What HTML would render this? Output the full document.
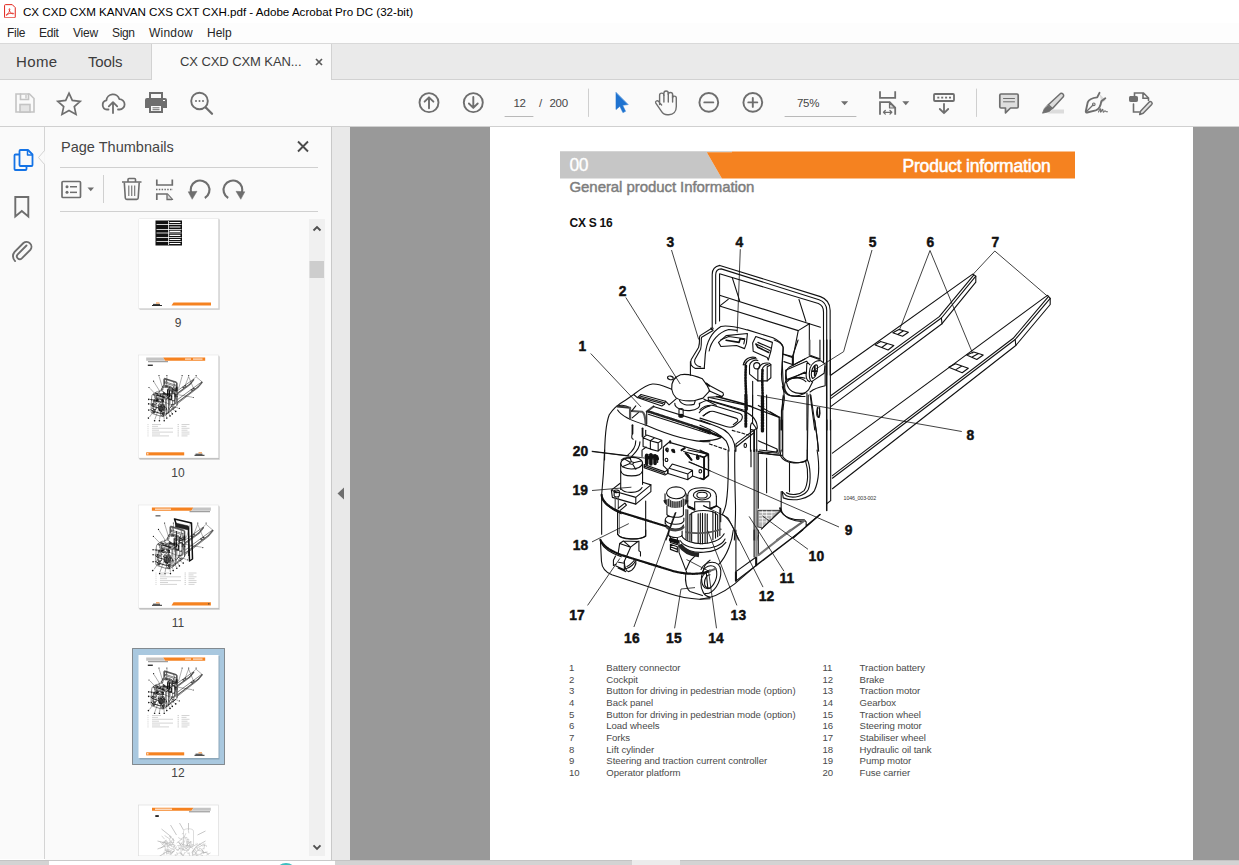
<!DOCTYPE html>
<html lang="en">
<head>
<meta charset="utf-8">
<title>CX CXD CXM KANVAN CXS CXT CXH.pdf - Adobe Acrobat Pro DC (32-bit)</title>
<style>
html,body{margin:0;padding:0;}
body{width:1239px;height:865px;overflow:hidden;position:relative;background:#fff;font-family:"Liberation Sans","DejaVu Sans",sans-serif;color:#000;}
.abs{position:absolute;}
#titlebar{left:0;top:0;width:1239px;height:23px;background:#fff;}
#titletext{left:23px;top:4px;font-size:11.6px;line-height:15px;white-space:nowrap;color:#000;}
#menubar{left:0;top:23px;width:1239px;height:20px;background:#fdfdfd;border-bottom:1px solid #d9d9d9;}
#menubar span{position:absolute;top:3px;font-size:12px;line-height:15px;color:#262626;}
#tabbar{left:0;top:44px;width:1239px;height:35px;background:#eaeaea;border-bottom:1px solid #d2d2d2;}
#tabbar .t{position:absolute;top:8px;font-size:15px;line-height:20px;color:#3c3c3c;white-space:nowrap;}
#acttab{left:151px;top:44px;width:181px;height:36px;background:#fafafa;border-left:1px solid #d2d2d2;border-right:1px solid #d2d2d2;box-sizing:border-box;}
#toolbar{left:0;top:80px;width:1239px;height:46px;background:#fafafa;border-bottom:1px solid #d0d0d0;}
#leftstrip{left:0;top:127px;width:44px;height:732px;background:#fafafa;border-right:1px solid #d4d4d4;}
#thumbpanel{left:45px;top:127px;width:286px;height:733px;background:#fafafa;border-right:1px solid #c9c9c9;}
#splitter{left:332px;top:127px;width:18px;height:733px;background:#e9e9e9;}
#docarea{left:350px;top:127px;width:889px;height:733px;background:#999;overflow:hidden;}
#page{left:140.400px;top:0;width:702.400px;height:740px;background:#fff;}
.lg{font-size:9.600px;line-height:11px;color:#4a4a4a;white-space:nowrap;letter-spacing:-0.060px;}
.tl{width:40px;text-align:center;font-size:12px;line-height:14px;color:#444;}
.tb{font-size:11.5px;line-height:14px;color:#464646;white-space:nowrap;letter-spacing:-0.3px;}
#bottom{left:0;top:859.500px;width:1239px;height:6px;background:#d3d3d3;border-top:1px solid #c4c4c4;box-sizing:border-box;}
</style>
</head>
<body>
<div id="titlebar" class="abs"></div>
<svg class="abs" style="left:4px;top:3.500px" width="12" height="14.500" viewBox="0 0 13 16"><path d="M1.500 0.700h7.500l3.300 3.300v10.300a1 1 0 0 1-1 1H1.500a1 1 0 0 1-1-1V1.700a1 1 0 0 1 1-1z" fill="#fff" stroke="#e2231a" stroke-width="1.100"/><path d="M3 11.500c1.500-0.600 2.800-2.600 3.300-5.500 0.200-1.200-1-1.200-0.800 0 0.500 2.600 2.300 4.600 4.300 5 1 0.200 1-0.900 0-0.900-2.300 0-5 0.500-6.800 1.400-0.900 0.500-0.600 1.200 0 1z" fill="none" stroke="#e2231a" stroke-width="0.900"/></svg>
<div id="titletext" class="abs">CX CXD CXM KANVAN CXS CXT CXH.pdf - Adobe Acrobat Pro DC (32-bit)</div>
<div id="menubar" class="abs">
<span style="left:7px;letter-spacing:-0.3px">File</span><span style="left:39px;letter-spacing:-0.25px">Edit</span><span style="left:73px;letter-spacing:-0.2px">View</span><span style="left:112px;letter-spacing:-0.35px">Sign</span><span style="left:149px;letter-spacing:0.2px">Window</span><span style="left:207px">Help</span>
</div>
<div id="tabbar" class="abs">
<span class="t" style="left:16px;letter-spacing:0.4px">Home</span><span class="t" style="left:88px;letter-spacing:-0.15px">Tools</span>
</div>
<div id="acttab" class="abs"><span class="abs" style="left:28px;top:8px;font-size:13px;line-height:20px;color:#3c3c3c;white-space:nowrap;letter-spacing:-0.08px">CX CXD CXM KAN...</span>
<svg class="abs" style="left:163px;top:14px" width="8" height="8" viewBox="0 0 8 8"><path d="M1 1L7 7M7 1L1 7" stroke="#5a5a5a" stroke-width="1.700" fill="none"/></svg></div>
<div id="toolbar" class="abs"></div>
<svg class="abs" style="left:0;top:80px" width="1239" height="46" viewBox="0 80 1239 46" fill="none" stroke="#6e6e6e" stroke-width="1.8" stroke-linejoin="round" stroke-linecap="round">
<!-- save (disabled) -->
<g stroke="#c4c4c4" stroke-width="1.6" stroke-linejoin="miter"><path d="M16 94h13.5l4.5 4.5V112H16z"/><path d="M20.5 94v5.5h8V94" /><path d="M26 95.5v2.5" stroke-width="1.4"/><rect x="20" y="104.5" width="10" height="7.5" fill="#e4e4e4"/></g>
<!-- star -->
<path d="M69 93.2l3.3 7.2 7.9 0.9-5.9 5.3 1.7 7.8-7-4-7 4 1.7-7.8-5.9-5.3 7.9-0.9z" stroke-width="1.7" stroke-linejoin="miter"/>
<!-- cloud upload -->
<path d="M108.5 109.5h-1.5a4.6 4.6 0 0 1-0.6-9.1 6.6 6.6 0 0 1 12.9-1.3 5.2 5.2 0 0 1 0.2 10.4h-1.5" stroke-width="1.8"/>
<path d="M113 113v-10.5M108.8 106.3l4.2-4.2 4.2 4.2" stroke-width="1.8"/>
<!-- printer -->
<g stroke="none" fill="#6e6e6e"><path d="M149 92h14v6h-2v-4h-10v4h-2z"/><path d="M147 98h18a2 2 0 0 1 2 2v8h-4v-4h-14v4h-4v-8a2 2 0 0 1 2-2z"/><path d="M149 104h14v9h-14zM151 106v5h10v-5z" fill-rule="evenodd"/><rect x="152.5" y="107.3" width="7" height="1"/><rect x="152.5" y="109.2" width="7" height="1"/><rect x="163" y="100" width="2" height="1" fill="#fff"/></g>
<!-- search -->
<circle cx="199.5" cy="101" r="8.3" stroke-width="1.9"/><path d="M205.8 107.5l6.2 6.2" stroke-width="2.3"/>
<g stroke="none" fill="#6e6e6e"><circle cx="196" cy="101" r="1"/><circle cx="199.5" cy="101" r="1"/><circle cx="203" cy="101" r="1"/></g>
<!-- page up / down -->
<circle cx="429" cy="102.6" r="9.5" stroke-width="1.9"/><path d="M429 108.2v-10.5M424.6 101.7l4.4-4.4 4.4 4.4" stroke-width="1.9"/>
<circle cx="473.3" cy="102.6" r="9.5" stroke-width="1.9"/><path d="M473.3 97v10.5M468.9 103.5l4.4 4.4 4.4-4.4" stroke-width="1.9"/>
<path d="M505 116.5h28" stroke="#b9b9b9" stroke-width="1"/>
<path d="M588.5 89v27.5" stroke="#cfcfcf" stroke-width="1"/>
<!-- pointer -->
<path d="M616 92.7v16.8l3.9-3.2 3 6.3 2.6-1.3-2.9-6.1 5.2-0.6z" fill="#1f73d0" stroke="#1f73d0" stroke-width="0.6"/>
<!-- hand -->
<path d="M659.600 104.500V95.300a2.150 2.150 0 0 1 4.300 0V93.200a2.200 2.200 0 0 1 4.400 0V94.600a2.150 2.150 0 0 1 4.300 0V98a1.850 1.850 0 0 1 3.700 0V106.500c0 5-3 8.200-7.500 8.200h-1.500c-3 0-4.600-1.300-6-3.600l-5.500-8a1.600 1.600 0 0 1 2.700-1.700l3.100 3.600" stroke-width="1.400"/>
<path d="M663.900 95.300V102M668.300 93.500V102M672.600 95V102" stroke-width="1.400"/>
<!-- zoom out/in -->
<circle cx="708.8" cy="102.400" r="9.400" stroke-width="1.900"/><path d="M704.300 102.400h9" stroke-width="1.900"/>
<circle cx="752.800" cy="102.400" r="9.400" stroke-width="1.900"/><path d="M748.300 102.400h9M752.800 97.900v9" stroke-width="1.900"/>
<path d="M785 116.500h71" stroke="#b9b9b9" stroke-width="1"/>
<path d="M841 101.200h7.200l-3.600 4z" fill="#6e6e6e" stroke="none"/>
<!-- fit width -->
<path d="M880 91.200v6.600h15.200v-6.600" stroke-width="1.800" stroke-linejoin="miter" stroke-linecap="butt"/>
<path d="M880 114.800v-12.600h9.700l5.500 5.500v7.100" stroke-width="1.800" stroke-linejoin="miter" stroke-linecap="butt"/>
<path d="M889.500 102.500v5.500h5.500z" fill="#d6d6d6" stroke-width="1.200"/>
<path d="M883.500 112.300h8.300M885.300 110.500l-1.800 1.800 1.800 1.800M890 110.500l1.800 1.800-1.800 1.800" stroke-width="1.300"/>
<path d="M902.300 101.200h7l-3.500 4z" fill="#6e6e6e" stroke="none"/>
<!-- scroll mode -->
<rect x="934" y="94" width="20" height="7" rx="1" stroke-width="1.800"/>
<g stroke="none" fill="#6e6e6e"><rect x="937.300" y="96.700" width="2" height="1.800"/><rect x="941.200" y="96.700" width="2" height="1.800"/><rect x="945.100" y="96.700" width="2" height="1.800"/><rect x="949" y="96.700" width="2" height="1.800"/></g>
<path d="M944 104v9M939.800 109l4.200 4.200 4.200-4.200" stroke-width="1.800"/>
<path d="M976.500 89v27.500" stroke="#cfcfcf" stroke-width="1"/>
<!-- comment -->
<path d="M1001 94h16a1.200 1.200 0 0 1 1.200 1.200v11.600a1.200 1.200 0 0 1-1.200 1.200h-6.500l-5 4.800v-4.800h-4.500a1.200 1.200 0 0 1-1.200-1.200v-11.600a1.200 1.200 0 0 1 1.200-1.200z" fill="#dedede" stroke-width="1.700"/>
<path d="M1003.500 98.500h11M1003.500 101.800h11" stroke-width="1"/>
<!-- highlighter -->
<path d="M1048 113.500h16v-4h-12z" fill="#dcdcdc" stroke="none"/>
<path d="M1060.500 93.500a2.300 2.300 0 0 1 3 3l-11 12-4.200-3.800z" fill="#dcdcdc" stroke-width="1.500"/>
<path d="M1047.800 105.200l4.200 3.800-3 2.700-6.500 1.500 1.700-4.300z" fill="#6e6e6e" stroke-width="0.800"/>
<!-- sign -->
<path d="M1099.500 93.800l6 6.500-3.800 3z" fill="#d8d8d8" stroke="none"/>
<path d="M1099.500 92.800l-2.300 4.600c-4.500 0.500-8.500 2.300-9.500 5l-1.900 8.800c-0.200 0.900 0.500 1.500 1.300 1.300l8.600-2.200c3-0.900 5-4.500 5.600-9l4-3" stroke-width="1.900"/>
<path d="M1086.500 111.500l6.500-6.500" stroke-width="1.300"/><circle cx="1093.800" cy="104.300" r="1.300" stroke-width="1.100"/>
<path d="M1098.500 112c1-2.500 1.800-3.400 2.200-3.200 0.600 0.300-0.800 3.300 0 3.400 0.700 0.100 1.300-2.900 2-2.800 0.600 0.100 0 2.600 0.700 2.700 0.600 0.100 1-1.300 1.600-1.300 0.600 0 0.500 1 2.500 1" stroke-width="1.100"/>
<!-- edit/redact -->
<path d="M1134.500 97v-4h9l5 5v2.500M1143 93.300v5h5" stroke-width="1.600" stroke-linejoin="miter"/>
<rect x="1129.500" y="96.500" width="8" height="5" rx="0.800" fill="#6e6e6e" stroke-width="1"/>
<path d="M1133.500 104v8h6" stroke-width="1.600" stroke-linejoin="miter"/>
<path d="M1149 102.200a1.700 1.700 0 0 1 2.700 2.300l-8.500 8.800-3.500 1.200 1-3.600z" fill="#e2e2e2" stroke-width="1.500"/>
</svg>
<span class="abs tb" style="left:513.500px;top:96px;">12</span>
<span class="abs tb" style="left:539px;top:96px;">/</span>
<span class="abs tb" style="left:549.500px;top:96px;">200</span>
<span class="abs tb" style="left:797px;top:96px;">75%</span>
<div id="leftstrip" class="abs"></div>
<div id="thumbpanel" class="abs"></div>
<div id="thumbscroll" class="abs"></div>
<span class="abs" style="left:61px;top:137.600px;font-size:14.500px;line-height:18px;color:#444;white-space:nowrap;letter-spacing:0.020px">Page Thumbnails</span>
<span class="abs tl" style="left:158px;top:316px">9</span>
<span class="abs tl" style="left:158px;top:466px">10</span>
<span class="abs tl" style="left:158px;top:616px">11</span>
<span class="abs tl" style="left:158px;top:766px">12</span>
<svg class="abs" style="left:0;top:127px;z-index:3" width="350" height="733" viewBox="0 127 350 733" fill="none">
<!-- left strip icons -->
<path d="M44.500 150.500l-6 7 6 7" stroke="#d4d4d4" stroke-width="1" fill="#fafafa"/>
<path d="M45 151.500v12" stroke="#fafafa" stroke-width="1.500"/>
<g stroke="#1473e6" stroke-width="1.800" stroke-linejoin="round"><path d="M19.500 154.500h-4a1 1 0 0 0-1 1v13.500a1 1 0 0 0 1 1h10a1 1 0 0 0 1-1v-2"/><path d="M20.500 150h7.500l4.500 4.500v10.500a1 1 0 0 1-1 1h-11a1 1 0 0 1-1-1v-14a1 1 0 0 1 1-1z"/><path d="M27.500 150.300v4.700h4.700" stroke-width="1.500"/></g>
<path d="M15.300 197h13v19.500l-6.500-5.500-6.500 5.500z" stroke="#6e6e6e" stroke-width="1.900" stroke-linejoin="miter"/>
<path d="M26.500 246.500l-8.800 8.800a2.900 2.900 0 0 0 4.100 4.100l8.500-8.500a4.900 4.900 0 0 0-6.900-6.900l-8.800 8.800a6.800 6.800 0 0 0 0.500 9.300" stroke="#6e6e6e" stroke-width="1.900" stroke-linecap="round" transform="translate(0,-1)"/>
<!-- header -->
<path d="M298 141.500l10 10M308 141.500l-10 10" stroke="#4b4b4b" stroke-width="1.900"/>
<path d="M60 167.500h258M60 211.500h258" stroke="#d0d0d0" stroke-width="1"/>
<!-- options -->
<rect x="62" y="181.500" width="18.500" height="16" rx="1" stroke="#6e6e6e" stroke-width="1.700"/>
<g fill="#6e6e6e"><circle cx="67" cy="186.700" r="1.500"/><circle cx="67" cy="192.300" r="1.500"/><rect x="70" y="186" width="7" height="1.500"/><rect x="70" y="191.600" width="7" height="1.500"/><path d="M87.500 187.500h6.500l-3.250 3.800z"/></g>
<path d="M103.500 175v28" stroke="#d0d0d0"/>
<!-- trash -->
<g stroke="#6e6e6e" stroke-width="1.600"><path d="M122 182h19.500M128 182v-2.500a1 1 0 0 1 1-1h5.500a1 1 0 0 1 1 1v2.500"/><path d="M124.300 182.500l1 15.500a1.500 1.500 0 0 0 1.500 1.400h9.900a1.500 1.500 0 0 0 1.500-1.400l1-15.500"/><path d="M128.800 185.500v10.500M131.750 185.500v10.500M134.700 185.500v10.500" stroke-width="1.100"/></g>
<!-- page break -->
<g stroke="#6e6e6e" stroke-width="1.700"><path d="M156.800 179.500v5.500h15.500v-5.500"/><path d="M156 189.500h17" stroke-dasharray="1.500 1.300" stroke-width="1.500"/><path d="M156.800 200v-6h10.500l5 5.500v0.500"/><path d="M167 194v5.500h5" stroke-width="1.300" fill="#dcdcdc"/></g>
<!-- rotate -->
<g stroke="#6e6e6e" stroke-width="2.100" stroke-linecap="butt"><path d="M191.600 194A9.400 9.400 0 1 1 204.800 198"/><path d="M188.200 191.800l8.800-0.500-4.800 8z" fill="#6e6e6e" stroke-width="0.500"/></g>
<g stroke="#6e6e6e" stroke-width="2.100" stroke-linecap="butt"><path d="M241.400 194A9.400 9.400 0 1 0 228.200 198"/><path d="M244.800 191.800l-8.800-0.500 4.800 8z" fill="#6e6e6e" stroke-width="0.500"/></g>
<!-- scrollbar -->
<rect x="309" y="219" width="16" height="637" fill="#f0f0f0"/>
<rect x="309.500" y="261" width="14.500" height="17" fill="#cdcdcd"/>
<path d="M313.500 230.500l3.500-3.500 3.500 3.500" stroke="#505050" stroke-width="1.900"/>
<path d="M313.500 845.300l3.500 3.500 3.500-3.500" stroke="#505050" stroke-width="1.900"/>
<!-- collapse arrow -->
<path d="M344 487.500v12l-6.500-6z" fill="#6e6e6e"/>
<!-- thumb 9 -->
<rect x="140.0" y="219.5" width="80.0" height="90.5" fill="#e3e3e3"/><rect x="139.2" y="218.8" width="80.0" height="90.5" fill="#b9b9b9"/>
<rect x="138.500" y="219" width="80" height="89.500" fill="#fff"/><path d="M138.500 219v89.500h80V219" stroke="#e0e0e0" stroke-width="0.500"/>
<rect x="155.500" y="220.500" width="26.500" height="25" fill="#111"/>
<path d="M156.500 224.500h25M156.500 229.500h25M156.500 233h25M156.500 237.500h25M156.500 241.500h25M168.500 221v24" stroke="#fff" stroke-width="0.800"/>
<path d="M169.500 222.500h11M169.500 227h11M169.500 231.300h11M169.500 235.300h11M169.500 239.500h11M169.500 243.500h11" stroke="#fff" stroke-width="1.200"/>
<path d="M173.500 302.500h37.500v3.100h-39.500z" fill="#f58220"/><path d="M152 305.500h10M153 304.400h7" stroke="#111" stroke-width="0.900"/><path d="M156 303h3.500" stroke="#f58220" stroke-width="0.900"/>
<!-- thumb 10 -->
<rect x="140.0" y="356.5" width="80.0" height="103.5" fill="#e3e3e3"/><rect x="139.2" y="355.8" width="80.0" height="103.5" fill="#b9b9b9"/>
<rect x="138.500" y="355" width="80" height="103" fill="#fff" stroke="#e0e0e0" stroke-width="0.500"/>
<path d="M146.2 357.6h17l2 3.1h-19z" fill="#c4c4c4"/><path d="M163.2 357.6h42v3.100h-40z" fill="#f58220"/><rect x="148.0" y="361.2" width="20" height="1" fill="#888"/><rect x="185.0" y="358.4" width="6" height="1.4" fill="#fbd9bd"/><rect x="193.0" y="358.4" width="9.5" height="1.4" fill="#fbd9bd"/><rect x="147.8" y="364.6" width="5" height="1.3" fill="#222"/><rect x="146.2" y="452.3" width="38" height="3.1" fill="#f58220"/><rect x="147.0" y="453.0" width="1.5" height="1.6" fill="#fbd9bd"/><path d="M194.5 455.3h10M195.5 454.2h7" stroke="#111" stroke-width="0.9"/><path d="M198.5 452.8h3.500" stroke="#f58220" stroke-width="0.900"/><!--thumb10--><g fill="#111"><circle cx="149.0" cy="387.5" r="0.6"/><circle cx="153.6" cy="381.2" r="0.6"/><circle cx="159.0" cy="375.6" r="0.6"/><circle cx="166.9" cy="375.6" r="0.6"/><circle cx="182.1" cy="375.6" r="0.6"/><circle cx="188.7" cy="375.6" r="0.6"/><circle cx="196.1" cy="375.6" r="0.6"/><circle cx="193.2" cy="397.5" r="0.6"/><circle cx="179.3" cy="408.4" r="0.6"/><circle cx="175.7" cy="411.4" r="0.8"/><circle cx="172.3" cy="413.9" r="0.8"/><circle cx="170.0" cy="415.9" r="0.8"/><circle cx="166.8" cy="418.1" r="0.8"/><circle cx="164.2" cy="420.7" r="0.8"/><circle cx="159.4" cy="420.7" r="0.8"/><circle cx="154.6" cy="420.7" r="0.8"/><circle cx="148.4" cy="418.1" r="0.8"/><circle cx="148.8" cy="410.1" r="0.8"/><circle cx="148.7" cy="403.9" r="0.8"/><circle cx="148.8" cy="399.4" r="0.8"/></g><g transform="translate(138.5,362.5) scale(0.11396) translate(-490.4,-127)" fill="none" stroke="#111" stroke-width="0.5" stroke-linejoin="round">
<g transform="translate(690,255) scale(0.13877)">
<path d="M160 520V140Q160 85 215 75L940 300Q1010 325 1010 400V865" vector-effect="non-scaling-stroke" />
<path d="M185 495V145Q185 100 225 100L930 322Q985 340 985 400V865" vector-effect="non-scaling-stroke" />
<path d="M213 475V135L925 350Q962 365 962 410V775" vector-effect="non-scaling-stroke" />
<path d="M213 290L860 495" vector-effect="non-scaling-stroke" />
<path d="M275 320L213 368L780 545L860 495" vector-effect="non-scaling-stroke" />
<path d="M305 165L358 330" vector-effect="non-scaling-stroke" />
<path d="M785 320L835 478" vector-effect="non-scaling-stroke" />
<path d="M860 495L940 520" vector-effect="non-scaling-stroke" />
<path d="M860 495V720" vector-effect="non-scaling-stroke" />
<path d="M780 545L742 740V790" vector-effect="non-scaling-stroke" />
<path d="M742 740L672 715" vector-effect="non-scaling-stroke" />
<path d="M860 720L935 748" vector-effect="non-scaling-stroke" />
</g>
<g transform="translate(685,320) scale(0.10408)">
<path d="M185 465L195 330C205 230 250 120 345 62C420 45 520 75 600 95L845 170C900 195 935 225 945 265L935 420L945 640L955 750L940 865" vector-effect="non-scaling-stroke" />
<path d="M232 298C250 200 320 120 420 92L500 100" vector-effect="non-scaling-stroke" />
<path d="M265 75L145 150C130 170 150 200 130 265L60 380C45 420 60 450 100 465L185 465" vector-effect="non-scaling-stroke" />
<path d="M270 100L160 165C150 200 165 220 150 280L95 380C85 410 100 440 150 450" vector-effect="non-scaling-stroke" />
<path d="M250 75C245 95 270 100 270 80" vector-effect="non-scaling-stroke" />
<path d="M52 400V530" vector-effect="non-scaling-stroke" />
<path d="M322 215L395 150L600 130L590 225L572 275L495 245L345 255Z" vector-effect="non-scaling-stroke" />
<path d="M345 190L420 158L575 180L565 230" vector-effect="non-scaling-stroke" />
<path d="M395 195L520 215L530 180L560 185" vector-effect="non-scaling-stroke" stroke-width='0.64'/>
<path d="M680 158L840 215L825 300L800 385L790 360L655 300L650 220Z" vector-effect="non-scaling-stroke" />
<path d="M682 230L810 290L820 300M700 215L825 270" vector-effect="non-scaling-stroke" />
<path d="M682 232L700 262L805 312" vector-effect="non-scaling-stroke" stroke-width='0.60'/>
<path d="M560 430C570 380 620 345 680 360" vector-effect="non-scaling-stroke" />
<path d="M577 432C590 390 640 360 690 375" vector-effect="non-scaling-stroke" />
<path d="M620 440C625 400 660 380 700 390" vector-effect="non-scaling-stroke" />
<path d="M660 440a30 30 0 1 0 60 0a30 30 0 1 0 -60 0" vector-effect="non-scaling-stroke" />
<path d="M705 470C715 430 760 405 810 415L825 430V555L790 585H700" vector-effect="non-scaling-stroke" />
<path d="M740 480C750 440 780 425 800 430" vector-effect="non-scaling-stroke" />
<path d="M825 430L790 450V585" vector-effect="non-scaling-stroke" />
<path d="M620 440V520L700 585V470" vector-effect="non-scaling-stroke" />
<path d="M560 430H577" vector-effect="non-scaling-stroke" />
<path d="M585 440C575 600 590 700 592 865" vector-effect="non-scaling-stroke" stroke-width='1.04' />
<path d="M745 480C738 600 748 700 748 865" vector-effect="non-scaling-stroke" stroke-width='1.04' />
<path d="M650 590V865" vector-effect="non-scaling-stroke" />
<path d="M1040 350V430L950 400" vector-effect="non-scaling-stroke" />
<path d="M1153 375L1000 455C960 480 960 560 975 600C990 680 1050 720 1153 700" vector-effect="non-scaling-stroke" />
<path d="M1153 500L1010 570M985 590C1000 560 1100 540 1153 560" vector-effect="non-scaling-stroke" />
<path d="M935 640C950 720 1000 740 1153 735" vector-effect="non-scaling-stroke" />
<path d="M200 610L235 630L365 700L370 720L355 735L230 680" vector-effect="non-scaling-stroke" />
<path d="M205 610L232 632" vector-effect="non-scaling-stroke" stroke-width='0.80'/>
<path d="M222 742L355 735M222 742L640 830M222 742L225 770L560 865" vector-effect="non-scaling-stroke" />
<path d="M180 760L300 820" vector-effect="non-scaling-stroke" />
</g>
<g transform="translate(590,370) scale(0.10408)">
<path d="M140 865C140 700 150 520 185 430C215 380 270 330 340 290L420 235C480 190 540 140 600 135C680 130 720 165 785 185" vector-effect="non-scaling-stroke" />
<path d="M785 185C780 130 800 70 870 45C930 35 1000 50 1080 85L1120 140L1150 200L1085 270L1000 295C930 300 860 290 825 265C800 240 790 215 785 185" vector-effect="non-scaling-stroke" />
<path d="M745 70a28 17 15 1 0 55 12a28 17 15 1 0 -55 -12" vector-effect="non-scaling-stroke" />
<path d="M815 320C810 370 900 395 960 390C1030 385 1065 355 1050 320" vector-effect="non-scaling-stroke" />
<path d="M860 290C870 330 930 345 1000 330L1010 300" vector-effect="non-scaling-stroke" />
<path d="M855 380V440M895 380V440M853 440a22 14 0 1 0 44 0a22 14 0 1 0 -44 0M855 380a20 10 0 1 1 40 0" vector-effect="non-scaling-stroke" />
<path d="M862 440a12 8 0 1 0 24 0a12 8 0 1 0 -24 0" vector-effect="non-scaling-stroke" stroke-width='0.64'/>
<path d="M455 265L490 235L725 300L715 330L690 345Z" vector-effect="non-scaling-stroke" />
<path d="M470 262L700 325M480 250L715 315" vector-effect="non-scaling-stroke" />
<path d="M725 300L760 335L830 275" vector-effect="non-scaling-stroke" />
<path d="M420 235L455 265" vector-effect="non-scaling-stroke" />
<path d="M255 350C300 330 350 340 385 365" vector-effect="non-scaling-stroke" />
<path d="M262 350L385 362" vector-effect="non-scaling-stroke" stroke-width='0.80' stroke='#333'/>
<path d="M265 385C300 440 400 490 540 530" vector-effect="non-scaling-stroke" />
<path d="M385 365V470" vector-effect="non-scaling-stroke" stroke-width='0.88' stroke='#555'/>
<path d="M400 395L500 400C520 410 530 430 535 530" vector-effect="non-scaling-stroke" stroke-width='0.80' stroke='#555'/>
<path d="M405 460L465 410M400 395L440 345" vector-effect="non-scaling-stroke" />
<path d="M545 400L610 350" vector-effect="non-scaling-stroke" stroke-width='0.80' stroke='#444'/>
<path d="M545 400V520" vector-effect="non-scaling-stroke" />
<path d="M560 398L1153 592" vector-effect="non-scaling-stroke" stroke-width='1.04'  stroke='#222'/>
<path d="M610 350L1153 520" vector-effect="non-scaling-stroke" />
<path d="M560 425L1153 615" vector-effect="non-scaling-stroke" />
<path d="M540 530C700 600 950 690 1153 690" vector-effect="non-scaling-stroke" />
<path d="M408 530V610" vector-effect="non-scaling-stroke" stroke-width='0.72'/>
<path d="M408 610C395 640 400 660 415 665" vector-effect="non-scaling-stroke" />
<path d="M505 560V640" vector-effect="non-scaling-stroke" stroke-width='0.72'/>
<path d="M535 580V620" vector-effect="non-scaling-stroke" />
<path d="M440 680C440 740 400 790 360 820M480 690C480 760 430 800 400 830" vector-effect="non-scaling-stroke" />
<path d="M510 650L545 625L690 675L655 700M510 650V735L580 760V680L510 650M580 680L615 655M580 760L655 780V700L580 680M690 675V745L655 780" vector-effect="non-scaling-stroke" />
<path d="M705 865V740L770 685L780 700L1130 800L1140 865" vector-effect="non-scaling-stroke" />
<path d="M770 685V700" vector-effect="non-scaling-stroke" stroke-width='0.80'/>
<path d="M728 765a12 14 0 1 0 24 0a12 14 0 1 0 -24 0M788 775a12 14 0 1 0 24 0a12 14 0 1 0 -24 0" vector-effect="non-scaling-stroke" />
<path d="M880 770L910 750M920 800L950 830M1030 820L1040 850" vector-effect="non-scaling-stroke" stroke-width='0.88'/>
<path d="M20 780L370 825" vector-effect="non-scaling-stroke" />
<path d="M300 865C320 845 360 840 390 850" vector-effect="non-scaling-stroke" />
<path d="M545 845L640 830L650 865" vector-effect="non-scaling-stroke" stroke-width='1.40' />
<path d="M1050 410C1070 380 1120 350 1153 345M1085 440L1153 400" vector-effect="non-scaling-stroke" />
<path d="M500 770L540 740M500 770V830" vector-effect="non-scaling-stroke" />
</g>
<g transform="translate(590,450) scale(0.10408)">
<path d="M140 0C135 150 125 300 112 430V810" vector-effect="non-scaling-stroke" />
<path d="M295 130C300 55 500 50 505 125C500 200 300 200 295 130" vector-effect="non-scaling-stroke" />
<path d="M295 200C310 265 490 265 505 200" vector-effect="non-scaling-stroke" />
<path d="M295 130V380M505 125V330" vector-effect="non-scaling-stroke" />
<path d="M300 375C330 420 470 420 500 360" vector-effect="non-scaling-stroke" />
<path d="M382 125a18 12 0 1 0 36 0a18 12 0 1 0 -36 0M398 113L385 75M418 123L490 105M410 137L440 185M384 130L310 160M330 85L385 118" vector-effect="non-scaling-stroke" />
<path d="M205 385L290 320M505 310L585 335V400L440 520L215 455L205 385" vector-effect="non-scaling-stroke" />
<path d="M210 390L440 455L585 335M440 455V520" vector-effect="non-scaling-stroke" />
<path d="M232 395V440M282 405V440M230 395a26 12 0 1 0 52 5a26 12 0 1 0 -52 -5M232 440C245 455 270 455 282 440" vector-effect="non-scaling-stroke" />
<path d="M242 450V575M272 455V565" vector-effect="non-scaling-stroke" stroke='#444'/>
<path d="M272 560L335 510L350 530L290 580" vector-effect="non-scaling-stroke" />
<path d="M265 580V810C300 865 480 865 535 830V490" vector-effect="non-scaling-stroke" />
<path d="M282 600V800" vector-effect="non-scaling-stroke" stroke='#777'/>
<path d="M112 430C115 500 200 560 300 600L760 742" vector-effect="non-scaling-stroke" stroke-width='0.88' />
<path d="M114 455C125 515 210 575 300 612" vector-effect="non-scaling-stroke" />
<path d="M545 50V130M585 45V135M625 55V130" vector-effect="non-scaling-stroke" stroke-width='1.44'/>
<path d="M530 60C540 40 640 40 650 75V120" vector-effect="non-scaling-stroke" />
<path d="M520 140L720 210L745 190V225L720 240L520 170ZM520 155L720 225" vector-effect="non-scaling-stroke" />
<path d="M705 0V150L745 190" vector-effect="non-scaling-stroke" />
<path d="M760 175L790 135L985 195V250L940 285L750 225V180M790 135L760 175L940 230L985 195M940 230V285" vector-effect="non-scaling-stroke" />
<path d="M985 250L1090 285L1140 245V40L1100 70V280M940 0L1140 40M1100 70L900 15" vector-effect="non-scaling-stroke" />
<path d="M722 95a13 16 0 1 0 26 0a13 16 0 1 0 -26 0M1022 75a13 16 0 1 0 26 0a13 16 0 1 0 -26 0M1047 205a13 16 0 1 0 26 0a13 16 0 1 0 -26 0" vector-effect="non-scaling-stroke" />
<path d="M940 50L975 95M790 0L810 20M735 0L745 12" vector-effect="non-scaling-stroke" stroke-width='0.88'/>
<path d="M950 115L1153 200" vector-effect="non-scaling-stroke" />
<path d="M825 600L730 865" vector-effect="non-scaling-stroke" />
<path d="M1090 535L1153 565" vector-effect="non-scaling-stroke" />
</g>
<g transform="translate(590,530) scale(0.10408)">
<path d="M265 0V40C300 100 480 100 535 55V0" vector-effect="non-scaling-stroke" />
<path d="M100 95L110 300C115 380 160 410 210 430L760 610C850 640 950 660 1050 665L1153 660" vector-effect="non-scaling-stroke" />
<path d="M100 95C130 160 200 200 300 240L800 395C900 420 1000 430 1100 410L1153 390" vector-effect="non-scaling-stroke" stroke-width='0.88' />
<path d="M105 120C135 185 210 225 300 258" vector-effect="non-scaling-stroke" />
<path d="M285 130L320 105L460 110M285 130L270 230M470 105V200L485 210V250M320 105L390 165L460 110M390 165L330 300M285 130L390 165" vector-effect="non-scaling-stroke" />
<path d="M245 250L225 290V340L250 330M250 345L335 385M270 365L345 400M275 310L330 320M330 300V390" vector-effect="non-scaling-stroke" />
<path d="M330 300C330 360 350 400 370 400C420 390 450 330 440 290" vector-effect="non-scaling-stroke" />
<path d="M355 350C380 340 420 300 425 290M350 370C390 360 430 320 435 300" vector-effect="non-scaling-stroke" />
<path d="M855 100V215L930 410M1020 240L960 300L925 380" vector-effect="non-scaling-stroke" />
<path d="M1153 290C1120 310 1090 360 1085 410" vector-effect="non-scaling-stroke" />
<path d="M1153 400C1100 400 1065 450 1065 510C1065 580 1100 640 1153 645" vector-effect="non-scaling-stroke" />
<path d="M1153 430C1120 430 1100 470 1100 510C1100 540 1120 560 1153 560" vector-effect="non-scaling-stroke" />
<path d="M920 420C910 500 930 570 960 590L1080 630" vector-effect="non-scaling-stroke" />
</g>
<g transform="translate(700,450) scale(0.10408)">
<path d="M270 0C275 200 270 400 250 520C240 570 225 600 215 620" vector-effect="non-scaling-stroke" />
<path d="M335 0C330 100 335 300 340 500C345 600 340 700 330 865" vector-effect="non-scaling-stroke" />
<path d="M215 620C280 650 330 760 370 865" vector-effect="non-scaling-stroke" />
<path d="M490 0V160" vector-effect="non-scaling-stroke" />
<path d="M520 0V865" vector-effect="non-scaling-stroke" />
<path d="M543 0V865" vector-effect="non-scaling-stroke" stroke-width='0.96' stroke='#8a8a8a'/>
<path d="M560 30V560M640 80V410" vector-effect="non-scaling-stroke" />
<path d="M560 30L770 50L780 0M570 0L740 20L745 0" vector-effect="non-scaling-stroke" />
<path d="M770 50C790 90 830 120 900 125C960 125 1010 110 1030 90V0" vector-effect="non-scaling-stroke" />
<path d="M1030 90C1060 150 1070 300 1040 380C1010 440 900 470 830 440L790 400" vector-effect="non-scaling-stroke" />
<path d="M1125 0C1150 150 1140 300 1100 390C1050 470 900 500 800 460L790 400" vector-effect="non-scaling-stroke" />
<path d="M860 125V400" vector-effect="non-scaling-stroke" />
<path d="M1015 110C1045 200 1040 330 1000 390C960 430 880 440 830 410" vector-effect="non-scaling-stroke" />
<path d="M780 400V590C800 640 900 680 1000 670L1020 690V730L1153 620" vector-effect="non-scaling-stroke" />
<path d="M790 600C820 650 900 690 990 685" vector-effect="non-scaling-stroke" />
<path d="M560 580L770 580L600 750L560 740Z" vector-effect="non-scaling-stroke" fill='#b5b5b5' stroke-width='0.32'/>
<path d="M575 600L720 600M570 630L690 630M570 660L660 660M570 690L630 690M600 585L600 740M640 585L640 700M690 585L690 660" vector-effect="non-scaling-stroke" stroke='#fff' stroke-width='0.28'/>
<path d="M770 560L782 592" vector-effect="non-scaling-stroke" stroke-width='0.80'/>
<path d="M770 590L590 760" vector-effect="non-scaling-stroke" />
<path d="M1000 680L740 865" vector-effect="non-scaling-stroke" stroke-width='0.88' stroke='#666'/>
<path d="M1153 620L900 840" vector-effect="non-scaling-stroke" stroke-width='0.60'/>
<path d="M545 865L560 820" vector-effect="non-scaling-stroke" />
<path d="M0 0L80 40V245L35 280L0 270M35 70V280M0 55L35 70L80 40" vector-effect="non-scaling-stroke" />
</g>
<g transform="translate(700,530) scale(0.10408)">
<path d="M320 0C310 100 260 250 180 330" vector-effect="non-scaling-stroke" />
<path d="M345 0V490M345 400L540 260V340L345 490" vector-effect="non-scaling-stroke" />
<path d="M345 405V488M540 265V338" vector-effect="non-scaling-stroke" stroke-width='0.80'/>
<path d="M520 0V260M560 0V240" vector-effect="non-scaling-stroke" />
<path d="M543 0V250" vector-effect="non-scaling-stroke" stroke-width='0.96' stroke='#8a8a8a'/>
<path d="M565 240L870 0" vector-effect="non-scaling-stroke" stroke-width='0.88' stroke='#777'/>
<path d="M540 340L985 0" vector-effect="non-scaling-stroke" stroke-width='0.60'/>
<path d="M0 665C100 660 200 620 330 520L540 340" vector-effect="non-scaling-stroke" />
<path d="M25 400C60 330 150 320 160 400C170 480 110 580 60 560C20 550 0 470 25 400" vector-effect="non-scaling-stroke" />
<path d="M10 380C50 290 190 280 200 390C205 500 130 620 50 610" vector-effect="non-scaling-stroke" />
<path d="M60 405L75 560" vector-effect="non-scaling-stroke" />
<path d="M90 395L150 372" vector-effect="non-scaling-stroke" stroke-width='0.80' stroke='#666'/>
</g>
<g transform="translate(770,340) scale(0.10408)">
<path d="M545 0V865" vector-effect="non-scaling-stroke" stroke-width='0.60'/>
<path d="M580 0V865" vector-effect="non-scaling-stroke" />
<path d="M480 0V190M515 0V195" vector-effect="non-scaling-stroke" />
<path d="M40 0C100 20 130 50 125 90L110 330C110 400 130 480 160 510" vector-effect="non-scaling-stroke" />
<path d="M270 0L215 160L125 135M215 160V240" vector-effect="non-scaling-stroke" />
<path d="M385 0V150" vector-effect="non-scaling-stroke" stroke='#888'/>
<path d="M215 245L385 155L470 185M150 290L350 205L385 240M150 290L160 380L350 310L355 205M350 310C340 350 350 390 380 400" vector-effect="non-scaling-stroke" />
<path d="M160 380C130 420 130 500 190 530C250 550 330 530 370 480C390 440 400 420 410 400" vector-effect="non-scaling-stroke" />
<path d="M170 385C230 350 310 360 345 400" vector-effect="non-scaling-stroke" />
<path d="M385 270C400 220 450 190 490 200L530 230M385 270C370 330 380 390 400 400L520 320L530 230" vector-effect="non-scaling-stroke" />
<path d="M400 300C410 250 440 230 455 245C465 290 440 360 410 370C400 360 395 330 400 300" vector-effect="non-scaling-stroke" />
<path d="M430 250V340M410 300H450" vector-effect="non-scaling-stroke" stroke-width='0.72'/>
<path d="M385 500C420 470 480 450 530 440V250" vector-effect="non-scaling-stroke" />
<path d="M355 510V865M385 520L430 865M130 540L110 680V865M95 740V865M0 690L95 745" vector-effect="non-scaling-stroke" />
<path d="M455 650C445 700 450 740 465 745C485 730 485 680 470 650" vector-effect="non-scaling-stroke" />
</g>
<g transform="translate(770,420) scale(0.10408)">
<path d="M545 0V870" vector-effect="non-scaling-stroke" stroke-width='0.60'/>
<path d="M583 0V775L545 805" vector-effect="non-scaling-stroke" />
<path d="M95 0V300M118 0V300M430 0C445 100 460 200 462 290" vector-effect="non-scaling-stroke" />
<path d="M357 0V290" vector-effect="non-scaling-stroke" stroke='#777'/>
</g>
<g transform="translate(0,0) scale(1.00000)">
<path d="M830.7 375.3L972.7 274.1L975.8 276.1L975.8 282.2L942.0 323.7L830.7 406.6" vector-effect="non-scaling-stroke" />
<path d="M975.8 276.1L941.4 318.0L830.7 398.6" vector-effect="non-scaling-stroke" />
<path d="M973.9 274.9L939.3 316.6L830.7 395.7" vector-effect="non-scaling-stroke" />
<path d="M941.4 318.0L942.0 323.7" vector-effect="non-scaling-stroke" />
<path d="M832.4 453.1L1044.6 297.4L1047.6 295.4L1050.2 298.4L1050.2 304.5L1015.8 345.5L832.4 488.7" vector-effect="non-scaling-stroke" />
<path d="M1050.2 298.4L1015.2 339.5L832.4 478.2" vector-effect="non-scaling-stroke" />
<path d="M1048.4 296.6L1013.2 338.3L832.4 475.6" vector-effect="non-scaling-stroke" />
<path d="M1015.2 339.5L1015.8 345.5" vector-effect="non-scaling-stroke" />
<path d="M892.8 332.8L898.9 329.4L903.6 330.8L897.6 334.5ZM897.6 334.5L903.6 330.8L908.4 332.2L902.5 336.2Z" vector-effect="non-scaling-stroke" />
<path d="M875.2 344.9L880.6 341.5L887.2 343.5L881.7 347.5ZM881.7 347.5L887.2 343.5L893.8 345.5L888.1 350.0Z" vector-effect="non-scaling-stroke" />
<path d="M966.7 355.0L973.7 352.0L978.5 353.5L971.7 357.3ZM971.7 357.3L978.5 353.5L983.2 355.0L976.8 359.5Z" vector-effect="non-scaling-stroke" />
<path d="M948.8 367.2L955.5 363.8L961.9 366.0L955.5 369.9ZM955.5 369.9L961.9 366.0L968.3 368.2L962.2 372.7Z" vector-effect="non-scaling-stroke" />
</g>
<g transform="translate(700,395) scale(0.10408)">
<path d="M160 15L445 92" vector-effect="non-scaling-stroke" stroke-width='0.64'/>
<path d="M445 95L760 215V560L560 545M560 100L760 215" vector-effect="non-scaling-stroke" />
<path d="M0 140C40 105 90 95 130 100L385 178C415 192 412 225 392 248L330 298C308 315 280 312 250 303L0 222" vector-effect="non-scaling-stroke" />
<path d="M35 200C60 170 95 152 135 158L345 222C370 232 368 250 350 262L320 285" vector-effect="non-scaling-stroke" />
<path d="M0 80C50 52 60 50 90 55L400 150C480 175 540 220 550 300V320" vector-effect="non-scaling-stroke" />
<path d="M310 340L470 385M90 470L250 525" vector-effect="non-scaling-stroke" />
<path d="M0 240L180 310C260 340 310 400 330 470L340 540" vector-effect="non-scaling-stroke" />
<path d="M0 290C100 330 200 380 250 440C270 480 280 520 278 540" vector-effect="non-scaling-stroke" />
<path d="M0 322L200 402" vector-effect="non-scaling-stroke" stroke-width='0.96' />
<path d="M0 440C80 440 160 430 200 410" vector-effect="non-scaling-stroke" />
<path d="M345 470L500 350L520 340M345 500L515 365M345 470V540" vector-effect="non-scaling-stroke" />
<path d="M520 340V540" vector-effect="non-scaling-stroke" stroke-width='0.72'/>
<path d="M423 485a12 20 0 1 0 24 0a12 20 0 1 0 -24 0" vector-effect="non-scaling-stroke" />
<path d="M485 300C490 270 500 260 505 270L540 320L520 340L485 330ZM485 330V540M545 320V540" vector-effect="non-scaling-stroke" />
<path d="M440 0V300" vector-effect="non-scaling-stroke" stroke-width='1.20' />
<path d="M600 20V345" vector-effect="non-scaling-stroke" stroke-width='1.36' />
<path d="M505 0V270M640 0V530" vector-effect="non-scaling-stroke" />
<path d="M560 440L740 520V545M560 540C650 570 720 580 790 580" vector-effect="non-scaling-stroke" />
<path d="M800 0C790 50 790 100 795 150V590C830 650 960 670 1030 630L1040 0" vector-effect="non-scaling-stroke" />
<path d="M1065 0C1090 200 1130 400 1140 540" vector-effect="non-scaling-stroke" />
<path d="M1130 120C1125 170 1130 210 1145 215L1150 120" vector-effect="non-scaling-stroke" />
<path d="M0 545L75 575M35 600L0 590" vector-effect="non-scaling-stroke" />
</g>
<g transform="translate(660,480) scale(0.08673)">
<path d="M75 150C80 55 290 55 295 150C290 235 85 240 75 150" vector-effect="non-scaling-stroke" />
<path d="M72 225C100 305 260 305 296 225" vector-effect="non-scaling-stroke" stroke-width='2.60' stroke='#333' stroke-linecap='butt'/>
<path d="M85 205V290M110 225V305M135 235V312M160 240V316M185 242V318M210 240V316M235 235V312M260 225V305M282 210V290" vector-effect="non-scaling-stroke" stroke='#fff' stroke-width='0.22'/>
<path d="M58 160V260M302 160V250" vector-effect="non-scaling-stroke" />
<path d="M80 300V400C110 440 250 440 270 400V300" vector-effect="non-scaling-stroke" />
<path d="M60 460C65 425 95 415 110 422M60 460C80 520 250 530 275 470V440M60 460V500" vector-effect="non-scaling-stroke" />
<path d="M62 500C90 575 240 590 272 520" vector-effect="non-scaling-stroke" />
<path d="M80 545C130 590 230 590 270 545" vector-effect="non-scaling-stroke" stroke-width='0.96' stroke='#444'/>
<path d="M100 590V640C130 670 230 670 255 640V590" vector-effect="non-scaling-stroke" />
<path d="M120 650V720L200 745V668" vector-effect="non-scaling-stroke" />
<path d="M125 690L200 712" vector-effect="non-scaling-stroke" stroke-width='1.60'/>
<path d="M120 740L200 770V830L120 800ZM120 770L200 800" vector-effect="non-scaling-stroke" />
<path d="M320 180C325 110 400 88 490 90C580 92 645 125 650 190" vector-effect="non-scaling-stroke" />
<path d="M385 175a100 55 0 1 0 200 0a100 55 0 1 0 -200 0M425 175a60 33 0 1 0 120 0a60 33 0 1 0 -120 0" vector-effect="non-scaling-stroke" />
<path d="M320 180V300M650 190V300" vector-effect="non-scaling-stroke" />
<path d="M400 250H575V330M400 250V335M320 300L400 335M575 330L655 300L700 332V480" vector-effect="non-scaling-stroke" />
<path d="M330 310L395 340" vector-effect="non-scaling-stroke" stroke-width='0.96'/>
<path d="M585 330L650 300" vector-effect="non-scaling-stroke" stroke-width='0.72'/>
<path d="M345 400C400 335 600 335 660 400" vector-effect="non-scaling-stroke" />
<path d="M300 340V680M320 345V690M345 400V700M365 380V705" vector-effect="non-scaling-stroke" />
<path d="M440 390V730M465 385V735M490 385V735M520 388V730M545 392V725" vector-effect="non-scaling-stroke" />
<path d="M610 365V690M640 375V670M665 400V655M690 340V640" vector-effect="non-scaling-stroke" />
<path d="M300 600C400 625 600 612 700 568" vector-effect="non-scaling-stroke" stroke-width='0.72' stroke='#555'/>
<path d="M250 640C300 760 650 780 740 620M235 700C300 820 680 830 750 680M260 760C350 865 650 865 760 720" vector-effect="non-scaling-stroke" />
<path d="M228 745C280 830 380 860 450 865" vector-effect="non-scaling-stroke" stroke-width='1.80' stroke='#222' stroke-linecap='butt'/>
</g>
<path d="M590.700 353.500L641 406.900M625.800 297.500L680.200 384M671.500 250L698.700 339.500M740.300 249.200L737.200 332.500M872 250L843.600 351.700L814.300 370M930 250.500L899.500 329.800M930 250.500L972.700 353.500M994.800 251L972.700 274.700M994.800 251L1047 295.800M961.800 431.500L757.200 395.400M839 527L689.300 461.800M808 549.300L762.400 515.900M783.900 571.100L749.100 516.400M763 587.100L728 517.700L703.800 505.800M736.900 605.400L707.600 530.400M716.500 628.300L708.500 571L686.500 559.500M674.600 628.300L681 589L695 587.600M633.900 627L675.100 512.600M587.600 605.400L619.900 558.400M592 541.900L628.800 523.600M592 490.500L631.400 487.200M592 451.600L654.200 459.200" vector-effect="non-scaling-stroke" stroke-width="0.35"/>
</g><!--endthumb10--><path d="M147.5 424.5h1M152.0 424.5h9M177.5 424.5h1.500M181.5 424.5h8" stroke="#c9c9c9" stroke-width="0.800"/><path d="M147.5 426.4h1M152.0 426.4h6M177.5 426.4h1.500M181.5 426.4h5" stroke="#c9c9c9" stroke-width="0.800"/><path d="M147.5 428.3h1M152.0 428.3h21M177.5 428.3h1.500M181.5 428.3h8" stroke="#c9c9c9" stroke-width="0.800"/><path d="M147.5 430.2h1M152.0 430.2h7M177.5 430.2h1.500M181.5 430.2h6" stroke="#c9c9c9" stroke-width="0.800"/><path d="M147.5 432.1h1M152.0 432.1h21M177.5 432.1h1.500M181.5 432.1h8" stroke="#c9c9c9" stroke-width="0.800"/><path d="M147.5 434.0h1M152.0 434.0h8M177.5 434.0h1.500M181.5 434.0h8" stroke="#c9c9c9" stroke-width="0.800"/><path d="M147.5 435.9h1M152.0 435.9h17M177.5 435.9h1.500M181.5 435.9h6" stroke="#c9c9c9" stroke-width="0.800"/>
<!-- thumb 11 -->
<rect x="140.0" y="506.5" width="80.0" height="103.5" fill="#e3e3e3"/><rect x="139.2" y="505.8" width="80.0" height="103.5" fill="#b9b9b9"/>
<rect x="138.500" y="505" width="80" height="103" fill="#fff" stroke="#e0e0e0" stroke-width="0.500"/>
<path d="M151.9 507.6h41.500l-2 3.100h-39.500z" fill="#f58220"/><path d="M193.4 507.6h17.500v3.100h-19.500z" fill="#c4c4c4"/><rect x="155.0" y="508.5" width="16" height="1.4" fill="#fbd9bd"/><rect x="189.5" y="511.2" width="20.5" height="1" fill="#888"/><rect x="155.5" y="515.3" width="5" height="1.1" fill="#444"/><path d="M173.5 602.3h37.400v3.100h-39.400z" fill="#f58220"/><rect x="208.0" y="603.0" width="1.5" height="1.6" fill="#7a5a3a"/><path d="M152.0 605.3h10M153.0 604.2h7" stroke="#111" stroke-width="0.9"/><path d="M156.0 602.8h3.500" stroke="#f58220" stroke-width="0.900"/><g fill="none" stroke="#111" stroke-linejoin="round"><path d="M174.5 519l17 4 1 36-3 2-1-33-12-3z" stroke-width="1.500"/><path d="M175.5 523l13 3v4l-13-3z" fill="#222" stroke-width="0.500"/><path d="M176.5 531v10M188.5 534v22" stroke-width="0.800"/></g><!--thumb11--><g fill="#111"><circle cx="153.4" cy="536.4" r="0.6"/><circle cx="158.5" cy="529.4" r="0.6"/><circle cx="164.6" cy="523.1" r="0.6"/><circle cx="173.4" cy="523.1" r="0.6"/><circle cx="190.4" cy="523.1" r="0.6"/><circle cx="197.8" cy="523.1" r="0.6"/><circle cx="206.1" cy="523.1" r="0.6"/><circle cx="202.8" cy="547.6" r="0.6"/><circle cx="187.3" cy="559.8" r="0.6"/><circle cx="183.2" cy="563.1" r="0.8"/><circle cx="179.4" cy="565.9" r="0.8"/><circle cx="176.8" cy="568.2" r="0.8"/><circle cx="173.2" cy="570.6" r="0.8"/><circle cx="170.4" cy="573.6" r="0.8"/><circle cx="165.0" cy="573.6" r="0.8"/><circle cx="159.7" cy="573.6" r="0.8"/><circle cx="152.7" cy="570.6" r="0.8"/><circle cx="153.1" cy="561.7" r="0.8"/><circle cx="153.1" cy="554.7" r="0.8"/><circle cx="153.1" cy="549.8" r="0.8"/></g><g transform="translate(141.6,508.4) scale(0.1276) translate(-490.4,-127)" fill="none" stroke="#111" stroke-width="0.5" stroke-linejoin="round">
<g transform="translate(690,255) scale(0.13877)">
<path d="M160 520V140Q160 85 215 75L940 300Q1010 325 1010 400V865" vector-effect="non-scaling-stroke" />
<path d="M185 495V145Q185 100 225 100L930 322Q985 340 985 400V865" vector-effect="non-scaling-stroke" />
<path d="M213 475V135L925 350Q962 365 962 410V775" vector-effect="non-scaling-stroke" />
<path d="M213 290L860 495" vector-effect="non-scaling-stroke" />
<path d="M275 320L213 368L780 545L860 495" vector-effect="non-scaling-stroke" />
<path d="M305 165L358 330" vector-effect="non-scaling-stroke" />
<path d="M785 320L835 478" vector-effect="non-scaling-stroke" />
<path d="M860 495L940 520" vector-effect="non-scaling-stroke" />
<path d="M860 495V720" vector-effect="non-scaling-stroke" />
<path d="M780 545L742 740V790" vector-effect="non-scaling-stroke" />
<path d="M742 740L672 715" vector-effect="non-scaling-stroke" />
<path d="M860 720L935 748" vector-effect="non-scaling-stroke" />
</g>
<g transform="translate(685,320) scale(0.10408)">
<path d="M185 465L195 330C205 230 250 120 345 62C420 45 520 75 600 95L845 170C900 195 935 225 945 265L935 420L945 640L955 750L940 865" vector-effect="non-scaling-stroke" />
<path d="M232 298C250 200 320 120 420 92L500 100" vector-effect="non-scaling-stroke" />
<path d="M265 75L145 150C130 170 150 200 130 265L60 380C45 420 60 450 100 465L185 465" vector-effect="non-scaling-stroke" />
<path d="M270 100L160 165C150 200 165 220 150 280L95 380C85 410 100 440 150 450" vector-effect="non-scaling-stroke" />
<path d="M250 75C245 95 270 100 270 80" vector-effect="non-scaling-stroke" />
<path d="M52 400V530" vector-effect="non-scaling-stroke" />
<path d="M322 215L395 150L600 130L590 225L572 275L495 245L345 255Z" vector-effect="non-scaling-stroke" />
<path d="M345 190L420 158L575 180L565 230" vector-effect="non-scaling-stroke" />
<path d="M395 195L520 215L530 180L560 185" vector-effect="non-scaling-stroke" stroke-width='0.64'/>
<path d="M680 158L840 215L825 300L800 385L790 360L655 300L650 220Z" vector-effect="non-scaling-stroke" />
<path d="M682 230L810 290L820 300M700 215L825 270" vector-effect="non-scaling-stroke" />
<path d="M682 232L700 262L805 312" vector-effect="non-scaling-stroke" stroke-width='0.60'/>
<path d="M560 430C570 380 620 345 680 360" vector-effect="non-scaling-stroke" />
<path d="M577 432C590 390 640 360 690 375" vector-effect="non-scaling-stroke" />
<path d="M620 440C625 400 660 380 700 390" vector-effect="non-scaling-stroke" />
<path d="M660 440a30 30 0 1 0 60 0a30 30 0 1 0 -60 0" vector-effect="non-scaling-stroke" />
<path d="M705 470C715 430 760 405 810 415L825 430V555L790 585H700" vector-effect="non-scaling-stroke" />
<path d="M740 480C750 440 780 425 800 430" vector-effect="non-scaling-stroke" />
<path d="M825 430L790 450V585" vector-effect="non-scaling-stroke" />
<path d="M620 440V520L700 585V470" vector-effect="non-scaling-stroke" />
<path d="M560 430H577" vector-effect="non-scaling-stroke" />
<path d="M585 440C575 600 590 700 592 865" vector-effect="non-scaling-stroke" stroke-width='1.04' />
<path d="M745 480C738 600 748 700 748 865" vector-effect="non-scaling-stroke" stroke-width='1.04' />
<path d="M650 590V865" vector-effect="non-scaling-stroke" />
<path d="M1040 350V430L950 400" vector-effect="non-scaling-stroke" />
<path d="M1153 375L1000 455C960 480 960 560 975 600C990 680 1050 720 1153 700" vector-effect="non-scaling-stroke" />
<path d="M1153 500L1010 570M985 590C1000 560 1100 540 1153 560" vector-effect="non-scaling-stroke" />
<path d="M935 640C950 720 1000 740 1153 735" vector-effect="non-scaling-stroke" />
<path d="M200 610L235 630L365 700L370 720L355 735L230 680" vector-effect="non-scaling-stroke" />
<path d="M205 610L232 632" vector-effect="non-scaling-stroke" stroke-width='0.80'/>
<path d="M222 742L355 735M222 742L640 830M222 742L225 770L560 865" vector-effect="non-scaling-stroke" />
<path d="M180 760L300 820" vector-effect="non-scaling-stroke" />
</g>
<g transform="translate(590,370) scale(0.10408)">
<path d="M140 865C140 700 150 520 185 430C215 380 270 330 340 290L420 235C480 190 540 140 600 135C680 130 720 165 785 185" vector-effect="non-scaling-stroke" />
<path d="M785 185C780 130 800 70 870 45C930 35 1000 50 1080 85L1120 140L1150 200L1085 270L1000 295C930 300 860 290 825 265C800 240 790 215 785 185" vector-effect="non-scaling-stroke" />
<path d="M745 70a28 17 15 1 0 55 12a28 17 15 1 0 -55 -12" vector-effect="non-scaling-stroke" />
<path d="M815 320C810 370 900 395 960 390C1030 385 1065 355 1050 320" vector-effect="non-scaling-stroke" />
<path d="M860 290C870 330 930 345 1000 330L1010 300" vector-effect="non-scaling-stroke" />
<path d="M855 380V440M895 380V440M853 440a22 14 0 1 0 44 0a22 14 0 1 0 -44 0M855 380a20 10 0 1 1 40 0" vector-effect="non-scaling-stroke" />
<path d="M862 440a12 8 0 1 0 24 0a12 8 0 1 0 -24 0" vector-effect="non-scaling-stroke" stroke-width='0.64'/>
<path d="M455 265L490 235L725 300L715 330L690 345Z" vector-effect="non-scaling-stroke" />
<path d="M470 262L700 325M480 250L715 315" vector-effect="non-scaling-stroke" />
<path d="M725 300L760 335L830 275" vector-effect="non-scaling-stroke" />
<path d="M420 235L455 265" vector-effect="non-scaling-stroke" />
<path d="M255 350C300 330 350 340 385 365" vector-effect="non-scaling-stroke" />
<path d="M262 350L385 362" vector-effect="non-scaling-stroke" stroke-width='0.80' stroke='#333'/>
<path d="M265 385C300 440 400 490 540 530" vector-effect="non-scaling-stroke" />
<path d="M385 365V470" vector-effect="non-scaling-stroke" stroke-width='0.88' stroke='#555'/>
<path d="M400 395L500 400C520 410 530 430 535 530" vector-effect="non-scaling-stroke" stroke-width='0.80' stroke='#555'/>
<path d="M405 460L465 410M400 395L440 345" vector-effect="non-scaling-stroke" />
<path d="M545 400L610 350" vector-effect="non-scaling-stroke" stroke-width='0.80' stroke='#444'/>
<path d="M545 400V520" vector-effect="non-scaling-stroke" />
<path d="M560 398L1153 592" vector-effect="non-scaling-stroke" stroke-width='1.04'  stroke='#222'/>
<path d="M610 350L1153 520" vector-effect="non-scaling-stroke" />
<path d="M560 425L1153 615" vector-effect="non-scaling-stroke" />
<path d="M540 530C700 600 950 690 1153 690" vector-effect="non-scaling-stroke" />
<path d="M408 530V610" vector-effect="non-scaling-stroke" stroke-width='0.72'/>
<path d="M408 610C395 640 400 660 415 665" vector-effect="non-scaling-stroke" />
<path d="M505 560V640" vector-effect="non-scaling-stroke" stroke-width='0.72'/>
<path d="M535 580V620" vector-effect="non-scaling-stroke" />
<path d="M440 680C440 740 400 790 360 820M480 690C480 760 430 800 400 830" vector-effect="non-scaling-stroke" />
<path d="M510 650L545 625L690 675L655 700M510 650V735L580 760V680L510 650M580 680L615 655M580 760L655 780V700L580 680M690 675V745L655 780" vector-effect="non-scaling-stroke" />
<path d="M705 865V740L770 685L780 700L1130 800L1140 865" vector-effect="non-scaling-stroke" />
<path d="M770 685V700" vector-effect="non-scaling-stroke" stroke-width='0.80'/>
<path d="M728 765a12 14 0 1 0 24 0a12 14 0 1 0 -24 0M788 775a12 14 0 1 0 24 0a12 14 0 1 0 -24 0" vector-effect="non-scaling-stroke" />
<path d="M880 770L910 750M920 800L950 830M1030 820L1040 850" vector-effect="non-scaling-stroke" stroke-width='0.88'/>
<path d="M20 780L370 825" vector-effect="non-scaling-stroke" />
<path d="M300 865C320 845 360 840 390 850" vector-effect="non-scaling-stroke" />
<path d="M545 845L640 830L650 865" vector-effect="non-scaling-stroke" stroke-width='1.40' />
<path d="M1050 410C1070 380 1120 350 1153 345M1085 440L1153 400" vector-effect="non-scaling-stroke" />
<path d="M500 770L540 740M500 770V830" vector-effect="non-scaling-stroke" />
</g>
<g transform="translate(590,450) scale(0.10408)">
<path d="M140 0C135 150 125 300 112 430V810" vector-effect="non-scaling-stroke" />
<path d="M295 130C300 55 500 50 505 125C500 200 300 200 295 130" vector-effect="non-scaling-stroke" />
<path d="M295 200C310 265 490 265 505 200" vector-effect="non-scaling-stroke" />
<path d="M295 130V380M505 125V330" vector-effect="non-scaling-stroke" />
<path d="M300 375C330 420 470 420 500 360" vector-effect="non-scaling-stroke" />
<path d="M382 125a18 12 0 1 0 36 0a18 12 0 1 0 -36 0M398 113L385 75M418 123L490 105M410 137L440 185M384 130L310 160M330 85L385 118" vector-effect="non-scaling-stroke" />
<path d="M205 385L290 320M505 310L585 335V400L440 520L215 455L205 385" vector-effect="non-scaling-stroke" />
<path d="M210 390L440 455L585 335M440 455V520" vector-effect="non-scaling-stroke" />
<path d="M232 395V440M282 405V440M230 395a26 12 0 1 0 52 5a26 12 0 1 0 -52 -5M232 440C245 455 270 455 282 440" vector-effect="non-scaling-stroke" />
<path d="M242 450V575M272 455V565" vector-effect="non-scaling-stroke" stroke='#444'/>
<path d="M272 560L335 510L350 530L290 580" vector-effect="non-scaling-stroke" />
<path d="M265 580V810C300 865 480 865 535 830V490" vector-effect="non-scaling-stroke" />
<path d="M282 600V800" vector-effect="non-scaling-stroke" stroke='#777'/>
<path d="M112 430C115 500 200 560 300 600L760 742" vector-effect="non-scaling-stroke" stroke-width='0.88' />
<path d="M114 455C125 515 210 575 300 612" vector-effect="non-scaling-stroke" />
<path d="M545 50V130M585 45V135M625 55V130" vector-effect="non-scaling-stroke" stroke-width='1.44'/>
<path d="M530 60C540 40 640 40 650 75V120" vector-effect="non-scaling-stroke" />
<path d="M520 140L720 210L745 190V225L720 240L520 170ZM520 155L720 225" vector-effect="non-scaling-stroke" />
<path d="M705 0V150L745 190" vector-effect="non-scaling-stroke" />
<path d="M760 175L790 135L985 195V250L940 285L750 225V180M790 135L760 175L940 230L985 195M940 230V285" vector-effect="non-scaling-stroke" />
<path d="M985 250L1090 285L1140 245V40L1100 70V280M940 0L1140 40M1100 70L900 15" vector-effect="non-scaling-stroke" />
<path d="M722 95a13 16 0 1 0 26 0a13 16 0 1 0 -26 0M1022 75a13 16 0 1 0 26 0a13 16 0 1 0 -26 0M1047 205a13 16 0 1 0 26 0a13 16 0 1 0 -26 0" vector-effect="non-scaling-stroke" />
<path d="M940 50L975 95M790 0L810 20M735 0L745 12" vector-effect="non-scaling-stroke" stroke-width='0.88'/>
<path d="M950 115L1153 200" vector-effect="non-scaling-stroke" />
<path d="M825 600L730 865" vector-effect="non-scaling-stroke" />
<path d="M1090 535L1153 565" vector-effect="non-scaling-stroke" />
</g>
<g transform="translate(590,530) scale(0.10408)">
<path d="M265 0V40C300 100 480 100 535 55V0" vector-effect="non-scaling-stroke" />
<path d="M100 95L110 300C115 380 160 410 210 430L760 610C850 640 950 660 1050 665L1153 660" vector-effect="non-scaling-stroke" />
<path d="M100 95C130 160 200 200 300 240L800 395C900 420 1000 430 1100 410L1153 390" vector-effect="non-scaling-stroke" stroke-width='0.88' />
<path d="M105 120C135 185 210 225 300 258" vector-effect="non-scaling-stroke" />
<path d="M285 130L320 105L460 110M285 130L270 230M470 105V200L485 210V250M320 105L390 165L460 110M390 165L330 300M285 130L390 165" vector-effect="non-scaling-stroke" />
<path d="M245 250L225 290V340L250 330M250 345L335 385M270 365L345 400M275 310L330 320M330 300V390" vector-effect="non-scaling-stroke" />
<path d="M330 300C330 360 350 400 370 400C420 390 450 330 440 290" vector-effect="non-scaling-stroke" />
<path d="M355 350C380 340 420 300 425 290M350 370C390 360 430 320 435 300" vector-effect="non-scaling-stroke" />
<path d="M855 100V215L930 410M1020 240L960 300L925 380" vector-effect="non-scaling-stroke" />
<path d="M1153 290C1120 310 1090 360 1085 410" vector-effect="non-scaling-stroke" />
<path d="M1153 400C1100 400 1065 450 1065 510C1065 580 1100 640 1153 645" vector-effect="non-scaling-stroke" />
<path d="M1153 430C1120 430 1100 470 1100 510C1100 540 1120 560 1153 560" vector-effect="non-scaling-stroke" />
<path d="M920 420C910 500 930 570 960 590L1080 630" vector-effect="non-scaling-stroke" />
</g>
<g transform="translate(700,450) scale(0.10408)">
<path d="M270 0C275 200 270 400 250 520C240 570 225 600 215 620" vector-effect="non-scaling-stroke" />
<path d="M335 0C330 100 335 300 340 500C345 600 340 700 330 865" vector-effect="non-scaling-stroke" />
<path d="M215 620C280 650 330 760 370 865" vector-effect="non-scaling-stroke" />
<path d="M490 0V160" vector-effect="non-scaling-stroke" />
<path d="M520 0V865" vector-effect="non-scaling-stroke" />
<path d="M543 0V865" vector-effect="non-scaling-stroke" stroke-width='0.96' stroke='#8a8a8a'/>
<path d="M560 30V560M640 80V410" vector-effect="non-scaling-stroke" />
<path d="M560 30L770 50L780 0M570 0L740 20L745 0" vector-effect="non-scaling-stroke" />
<path d="M770 50C790 90 830 120 900 125C960 125 1010 110 1030 90V0" vector-effect="non-scaling-stroke" />
<path d="M1030 90C1060 150 1070 300 1040 380C1010 440 900 470 830 440L790 400" vector-effect="non-scaling-stroke" />
<path d="M1125 0C1150 150 1140 300 1100 390C1050 470 900 500 800 460L790 400" vector-effect="non-scaling-stroke" />
<path d="M860 125V400" vector-effect="non-scaling-stroke" />
<path d="M1015 110C1045 200 1040 330 1000 390C960 430 880 440 830 410" vector-effect="non-scaling-stroke" />
<path d="M780 400V590C800 640 900 680 1000 670L1020 690V730L1153 620" vector-effect="non-scaling-stroke" />
<path d="M790 600C820 650 900 690 990 685" vector-effect="non-scaling-stroke" />
<path d="M560 580L770 580L600 750L560 740Z" vector-effect="non-scaling-stroke" fill='#b5b5b5' stroke-width='0.32'/>
<path d="M575 600L720 600M570 630L690 630M570 660L660 660M570 690L630 690M600 585L600 740M640 585L640 700M690 585L690 660" vector-effect="non-scaling-stroke" stroke='#fff' stroke-width='0.28'/>
<path d="M770 560L782 592" vector-effect="non-scaling-stroke" stroke-width='0.80'/>
<path d="M770 590L590 760" vector-effect="non-scaling-stroke" />
<path d="M1000 680L740 865" vector-effect="non-scaling-stroke" stroke-width='0.88' stroke='#666'/>
<path d="M1153 620L900 840" vector-effect="non-scaling-stroke" stroke-width='0.60'/>
<path d="M545 865L560 820" vector-effect="non-scaling-stroke" />
<path d="M0 0L80 40V245L35 280L0 270M35 70V280M0 55L35 70L80 40" vector-effect="non-scaling-stroke" />
</g>
<g transform="translate(700,530) scale(0.10408)">
<path d="M320 0C310 100 260 250 180 330" vector-effect="non-scaling-stroke" />
<path d="M345 0V490M345 400L540 260V340L345 490" vector-effect="non-scaling-stroke" />
<path d="M345 405V488M540 265V338" vector-effect="non-scaling-stroke" stroke-width='0.80'/>
<path d="M520 0V260M560 0V240" vector-effect="non-scaling-stroke" />
<path d="M543 0V250" vector-effect="non-scaling-stroke" stroke-width='0.96' stroke='#8a8a8a'/>
<path d="M565 240L870 0" vector-effect="non-scaling-stroke" stroke-width='0.88' stroke='#777'/>
<path d="M540 340L985 0" vector-effect="non-scaling-stroke" stroke-width='0.60'/>
<path d="M0 665C100 660 200 620 330 520L540 340" vector-effect="non-scaling-stroke" />
<path d="M25 400C60 330 150 320 160 400C170 480 110 580 60 560C20 550 0 470 25 400" vector-effect="non-scaling-stroke" />
<path d="M10 380C50 290 190 280 200 390C205 500 130 620 50 610" vector-effect="non-scaling-stroke" />
<path d="M60 405L75 560" vector-effect="non-scaling-stroke" />
<path d="M90 395L150 372" vector-effect="non-scaling-stroke" stroke-width='0.80' stroke='#666'/>
</g>
<g transform="translate(770,340) scale(0.10408)">
<path d="M545 0V865" vector-effect="non-scaling-stroke" stroke-width='0.60'/>
<path d="M580 0V865" vector-effect="non-scaling-stroke" />
<path d="M480 0V190M515 0V195" vector-effect="non-scaling-stroke" />
<path d="M40 0C100 20 130 50 125 90L110 330C110 400 130 480 160 510" vector-effect="non-scaling-stroke" />
<path d="M270 0L215 160L125 135M215 160V240" vector-effect="non-scaling-stroke" />
<path d="M385 0V150" vector-effect="non-scaling-stroke" stroke='#888'/>
<path d="M215 245L385 155L470 185M150 290L350 205L385 240M150 290L160 380L350 310L355 205M350 310C340 350 350 390 380 400" vector-effect="non-scaling-stroke" />
<path d="M160 380C130 420 130 500 190 530C250 550 330 530 370 480C390 440 400 420 410 400" vector-effect="non-scaling-stroke" />
<path d="M170 385C230 350 310 360 345 400" vector-effect="non-scaling-stroke" />
<path d="M385 270C400 220 450 190 490 200L530 230M385 270C370 330 380 390 400 400L520 320L530 230" vector-effect="non-scaling-stroke" />
<path d="M400 300C410 250 440 230 455 245C465 290 440 360 410 370C400 360 395 330 400 300" vector-effect="non-scaling-stroke" />
<path d="M430 250V340M410 300H450" vector-effect="non-scaling-stroke" stroke-width='0.72'/>
<path d="M385 500C420 470 480 450 530 440V250" vector-effect="non-scaling-stroke" />
<path d="M355 510V865M385 520L430 865M130 540L110 680V865M95 740V865M0 690L95 745" vector-effect="non-scaling-stroke" />
<path d="M455 650C445 700 450 740 465 745C485 730 485 680 470 650" vector-effect="non-scaling-stroke" />
</g>
<g transform="translate(770,420) scale(0.10408)">
<path d="M545 0V870" vector-effect="non-scaling-stroke" stroke-width='0.60'/>
<path d="M583 0V775L545 805" vector-effect="non-scaling-stroke" />
<path d="M95 0V300M118 0V300M430 0C445 100 460 200 462 290" vector-effect="non-scaling-stroke" />
<path d="M357 0V290" vector-effect="non-scaling-stroke" stroke='#777'/>
</g>
<g transform="translate(0,0) scale(1.00000)">
<path d="M830.7 375.3L972.7 274.1L975.8 276.1L975.8 282.2L942.0 323.7L830.7 406.6" vector-effect="non-scaling-stroke" />
<path d="M975.8 276.1L941.4 318.0L830.7 398.6" vector-effect="non-scaling-stroke" />
<path d="M973.9 274.9L939.3 316.6L830.7 395.7" vector-effect="non-scaling-stroke" />
<path d="M941.4 318.0L942.0 323.7" vector-effect="non-scaling-stroke" />
<path d="M832.4 453.1L1044.6 297.4L1047.6 295.4L1050.2 298.4L1050.2 304.5L1015.8 345.5L832.4 488.7" vector-effect="non-scaling-stroke" />
<path d="M1050.2 298.4L1015.2 339.5L832.4 478.2" vector-effect="non-scaling-stroke" />
<path d="M1048.4 296.6L1013.2 338.3L832.4 475.6" vector-effect="non-scaling-stroke" />
<path d="M1015.2 339.5L1015.8 345.5" vector-effect="non-scaling-stroke" />
<path d="M892.8 332.8L898.9 329.4L903.6 330.8L897.6 334.5ZM897.6 334.5L903.6 330.8L908.4 332.2L902.5 336.2Z" vector-effect="non-scaling-stroke" />
<path d="M875.2 344.9L880.6 341.5L887.2 343.5L881.7 347.5ZM881.7 347.5L887.2 343.5L893.8 345.5L888.1 350.0Z" vector-effect="non-scaling-stroke" />
<path d="M966.7 355.0L973.7 352.0L978.5 353.5L971.7 357.3ZM971.7 357.3L978.5 353.5L983.2 355.0L976.8 359.5Z" vector-effect="non-scaling-stroke" />
<path d="M948.8 367.2L955.5 363.8L961.9 366.0L955.5 369.9ZM955.5 369.9L961.9 366.0L968.3 368.2L962.2 372.7Z" vector-effect="non-scaling-stroke" />
</g>
<g transform="translate(700,395) scale(0.10408)">
<path d="M160 15L445 92" vector-effect="non-scaling-stroke" stroke-width='0.64'/>
<path d="M445 95L760 215V560L560 545M560 100L760 215" vector-effect="non-scaling-stroke" />
<path d="M0 140C40 105 90 95 130 100L385 178C415 192 412 225 392 248L330 298C308 315 280 312 250 303L0 222" vector-effect="non-scaling-stroke" />
<path d="M35 200C60 170 95 152 135 158L345 222C370 232 368 250 350 262L320 285" vector-effect="non-scaling-stroke" />
<path d="M0 80C50 52 60 50 90 55L400 150C480 175 540 220 550 300V320" vector-effect="non-scaling-stroke" />
<path d="M310 340L470 385M90 470L250 525" vector-effect="non-scaling-stroke" />
<path d="M0 240L180 310C260 340 310 400 330 470L340 540" vector-effect="non-scaling-stroke" />
<path d="M0 290C100 330 200 380 250 440C270 480 280 520 278 540" vector-effect="non-scaling-stroke" />
<path d="M0 322L200 402" vector-effect="non-scaling-stroke" stroke-width='0.96' />
<path d="M0 440C80 440 160 430 200 410" vector-effect="non-scaling-stroke" />
<path d="M345 470L500 350L520 340M345 500L515 365M345 470V540" vector-effect="non-scaling-stroke" />
<path d="M520 340V540" vector-effect="non-scaling-stroke" stroke-width='0.72'/>
<path d="M423 485a12 20 0 1 0 24 0a12 20 0 1 0 -24 0" vector-effect="non-scaling-stroke" />
<path d="M485 300C490 270 500 260 505 270L540 320L520 340L485 330ZM485 330V540M545 320V540" vector-effect="non-scaling-stroke" />
<path d="M440 0V300" vector-effect="non-scaling-stroke" stroke-width='1.20' />
<path d="M600 20V345" vector-effect="non-scaling-stroke" stroke-width='1.36' />
<path d="M505 0V270M640 0V530" vector-effect="non-scaling-stroke" />
<path d="M560 440L740 520V545M560 540C650 570 720 580 790 580" vector-effect="non-scaling-stroke" />
<path d="M800 0C790 50 790 100 795 150V590C830 650 960 670 1030 630L1040 0" vector-effect="non-scaling-stroke" />
<path d="M1065 0C1090 200 1130 400 1140 540" vector-effect="non-scaling-stroke" />
<path d="M1130 120C1125 170 1130 210 1145 215L1150 120" vector-effect="non-scaling-stroke" />
<path d="M0 545L75 575M35 600L0 590" vector-effect="non-scaling-stroke" />
</g>
<g transform="translate(660,480) scale(0.08673)">
<path d="M75 150C80 55 290 55 295 150C290 235 85 240 75 150" vector-effect="non-scaling-stroke" />
<path d="M72 225C100 305 260 305 296 225" vector-effect="non-scaling-stroke" stroke-width='2.60' stroke='#333' stroke-linecap='butt'/>
<path d="M85 205V290M110 225V305M135 235V312M160 240V316M185 242V318M210 240V316M235 235V312M260 225V305M282 210V290" vector-effect="non-scaling-stroke" stroke='#fff' stroke-width='0.22'/>
<path d="M58 160V260M302 160V250" vector-effect="non-scaling-stroke" />
<path d="M80 300V400C110 440 250 440 270 400V300" vector-effect="non-scaling-stroke" />
<path d="M60 460C65 425 95 415 110 422M60 460C80 520 250 530 275 470V440M60 460V500" vector-effect="non-scaling-stroke" />
<path d="M62 500C90 575 240 590 272 520" vector-effect="non-scaling-stroke" />
<path d="M80 545C130 590 230 590 270 545" vector-effect="non-scaling-stroke" stroke-width='0.96' stroke='#444'/>
<path d="M100 590V640C130 670 230 670 255 640V590" vector-effect="non-scaling-stroke" />
<path d="M120 650V720L200 745V668" vector-effect="non-scaling-stroke" />
<path d="M125 690L200 712" vector-effect="non-scaling-stroke" stroke-width='1.60'/>
<path d="M120 740L200 770V830L120 800ZM120 770L200 800" vector-effect="non-scaling-stroke" />
<path d="M320 180C325 110 400 88 490 90C580 92 645 125 650 190" vector-effect="non-scaling-stroke" />
<path d="M385 175a100 55 0 1 0 200 0a100 55 0 1 0 -200 0M425 175a60 33 0 1 0 120 0a60 33 0 1 0 -120 0" vector-effect="non-scaling-stroke" />
<path d="M320 180V300M650 190V300" vector-effect="non-scaling-stroke" />
<path d="M400 250H575V330M400 250V335M320 300L400 335M575 330L655 300L700 332V480" vector-effect="non-scaling-stroke" />
<path d="M330 310L395 340" vector-effect="non-scaling-stroke" stroke-width='0.96'/>
<path d="M585 330L650 300" vector-effect="non-scaling-stroke" stroke-width='0.72'/>
<path d="M345 400C400 335 600 335 660 400" vector-effect="non-scaling-stroke" />
<path d="M300 340V680M320 345V690M345 400V700M365 380V705" vector-effect="non-scaling-stroke" />
<path d="M440 390V730M465 385V735M490 385V735M520 388V730M545 392V725" vector-effect="non-scaling-stroke" />
<path d="M610 365V690M640 375V670M665 400V655M690 340V640" vector-effect="non-scaling-stroke" />
<path d="M300 600C400 625 600 612 700 568" vector-effect="non-scaling-stroke" stroke-width='0.72' stroke='#555'/>
<path d="M250 640C300 760 650 780 740 620M235 700C300 820 680 830 750 680M260 760C350 865 650 865 760 720" vector-effect="non-scaling-stroke" />
<path d="M228 745C280 830 380 860 450 865" vector-effect="non-scaling-stroke" stroke-width='1.80' stroke='#222' stroke-linecap='butt'/>
</g>
<path d="M590.700 353.500L641 406.900M625.800 297.500L680.200 384M671.500 250L698.700 339.500M740.300 249.200L737.200 332.500M872 250L843.600 351.700L814.300 370M930 250.500L899.500 329.800M930 250.500L972.700 353.500M994.800 251L972.700 274.700M994.800 251L1047 295.800M961.800 431.500L757.200 395.400M839 527L689.300 461.800M808 549.300L762.400 515.900M783.900 571.100L749.100 516.400M763 587.100L728 517.700L703.800 505.800M736.900 605.400L707.600 530.400M716.500 628.300L708.500 571L686.500 559.500M674.600 628.300L681 589L695 587.600M633.900 627L675.100 512.600M587.600 605.400L619.900 558.400M592 541.900L628.800 523.600M592 490.500L631.400 487.200M592 451.600L654.200 459.200" vector-effect="non-scaling-stroke" stroke-width="0.35"/>
</g><!--endthumb11--><path d="M155.5 573.0h1M160.0 573.0h9M184.5 573.0h1.500M188.5 573.0h8" stroke="#c9c9c9" stroke-width="0.800"/><path d="M155.5 574.9h1M160.0 574.9h6M184.5 574.9h1.500M188.5 574.9h5" stroke="#c9c9c9" stroke-width="0.800"/><path d="M155.5 576.8h1M160.0 576.8h21M184.5 576.8h1.500M188.5 576.8h8" stroke="#c9c9c9" stroke-width="0.800"/><path d="M155.5 578.7h1M160.0 578.7h7M184.5 578.7h1.500M188.5 578.7h6" stroke="#c9c9c9" stroke-width="0.800"/><path d="M155.5 580.6h1M160.0 580.6h21M184.5 580.6h1.500M188.5 580.6h8" stroke="#c9c9c9" stroke-width="0.800"/><path d="M155.5 582.5h1M160.0 582.5h8M184.5 582.5h1.500M188.5 582.5h8" stroke="#c9c9c9" stroke-width="0.800"/><path d="M155.5 584.4h1M160.0 584.4h17M184.5 584.4h1.500M188.5 584.4h6" stroke="#c9c9c9" stroke-width="0.800"/>
<!-- thumb 12 selected -->
<rect x="132.500" y="648.500" width="92" height="116" fill="#a9c8df" stroke="#333" stroke-width="1" stroke-dasharray="1 1"/>
<rect x="139.500" y="656" width="80" height="103.500" fill="#6f8596" opacity="0.500"/>
<rect x="138.500" y="655" width="80" height="103" fill="#fff"/>
<path d="M146.2 657.6h17l2 3.1h-19z" fill="#c4c4c4"/><path d="M163.2 657.6h42v3.100h-40z" fill="#f58220"/><rect x="148.0" y="661.2" width="20" height="1" fill="#888"/><rect x="185.0" y="658.4" width="6" height="1.4" fill="#fbd9bd"/><rect x="193.0" y="658.4" width="9.5" height="1.4" fill="#fbd9bd"/><rect x="147.8" y="664.6" width="5" height="1.3" fill="#222"/><rect x="146.2" y="752.3" width="38" height="3.1" fill="#f58220"/><rect x="147.0" y="753.0" width="1.5" height="1.6" fill="#fbd9bd"/><path d="M194.5 755.3h10M195.5 754.2h7" stroke="#111" stroke-width="0.9"/><path d="M198.5 752.8h3.500" stroke="#f58220" stroke-width="0.900"/><!--thumb12--><g fill="#111"><circle cx="149.0" cy="680.0" r="0.6"/><circle cx="153.6" cy="673.7" r="0.6"/><circle cx="159.0" cy="668.1" r="0.6"/><circle cx="166.9" cy="668.1" r="0.6"/><circle cx="182.1" cy="668.1" r="0.6"/><circle cx="188.7" cy="668.1" r="0.6"/><circle cx="196.1" cy="668.1" r="0.6"/><circle cx="193.2" cy="690.0" r="0.6"/><circle cx="179.3" cy="700.9" r="0.6"/><circle cx="175.7" cy="703.9" r="0.8"/><circle cx="172.3" cy="706.4" r="0.8"/><circle cx="170.0" cy="708.4" r="0.8"/><circle cx="166.8" cy="710.6" r="0.8"/><circle cx="164.2" cy="713.2" r="0.8"/><circle cx="159.4" cy="713.2" r="0.8"/><circle cx="154.6" cy="713.2" r="0.8"/><circle cx="148.4" cy="710.6" r="0.8"/><circle cx="148.8" cy="702.6" r="0.8"/><circle cx="148.7" cy="696.4" r="0.8"/><circle cx="148.8" cy="691.9" r="0.8"/></g><g transform="translate(138.5,655) scale(0.11396) translate(-490.4,-127)" fill="none" stroke="#111" stroke-width="0.5" stroke-linejoin="round">
<g transform="translate(690,255) scale(0.13877)">
<path d="M160 520V140Q160 85 215 75L940 300Q1010 325 1010 400V865" vector-effect="non-scaling-stroke" />
<path d="M185 495V145Q185 100 225 100L930 322Q985 340 985 400V865" vector-effect="non-scaling-stroke" />
<path d="M213 475V135L925 350Q962 365 962 410V775" vector-effect="non-scaling-stroke" />
<path d="M213 290L860 495" vector-effect="non-scaling-stroke" />
<path d="M275 320L213 368L780 545L860 495" vector-effect="non-scaling-stroke" />
<path d="M305 165L358 330" vector-effect="non-scaling-stroke" />
<path d="M785 320L835 478" vector-effect="non-scaling-stroke" />
<path d="M860 495L940 520" vector-effect="non-scaling-stroke" />
<path d="M860 495V720" vector-effect="non-scaling-stroke" />
<path d="M780 545L742 740V790" vector-effect="non-scaling-stroke" />
<path d="M742 740L672 715" vector-effect="non-scaling-stroke" />
<path d="M860 720L935 748" vector-effect="non-scaling-stroke" />
</g>
<g transform="translate(685,320) scale(0.10408)">
<path d="M185 465L195 330C205 230 250 120 345 62C420 45 520 75 600 95L845 170C900 195 935 225 945 265L935 420L945 640L955 750L940 865" vector-effect="non-scaling-stroke" />
<path d="M232 298C250 200 320 120 420 92L500 100" vector-effect="non-scaling-stroke" />
<path d="M265 75L145 150C130 170 150 200 130 265L60 380C45 420 60 450 100 465L185 465" vector-effect="non-scaling-stroke" />
<path d="M270 100L160 165C150 200 165 220 150 280L95 380C85 410 100 440 150 450" vector-effect="non-scaling-stroke" />
<path d="M250 75C245 95 270 100 270 80" vector-effect="non-scaling-stroke" />
<path d="M52 400V530" vector-effect="non-scaling-stroke" />
<path d="M322 215L395 150L600 130L590 225L572 275L495 245L345 255Z" vector-effect="non-scaling-stroke" />
<path d="M345 190L420 158L575 180L565 230" vector-effect="non-scaling-stroke" />
<path d="M395 195L520 215L530 180L560 185" vector-effect="non-scaling-stroke" stroke-width='0.64'/>
<path d="M680 158L840 215L825 300L800 385L790 360L655 300L650 220Z" vector-effect="non-scaling-stroke" />
<path d="M682 230L810 290L820 300M700 215L825 270" vector-effect="non-scaling-stroke" />
<path d="M682 232L700 262L805 312" vector-effect="non-scaling-stroke" stroke-width='0.60'/>
<path d="M560 430C570 380 620 345 680 360" vector-effect="non-scaling-stroke" />
<path d="M577 432C590 390 640 360 690 375" vector-effect="non-scaling-stroke" />
<path d="M620 440C625 400 660 380 700 390" vector-effect="non-scaling-stroke" />
<path d="M660 440a30 30 0 1 0 60 0a30 30 0 1 0 -60 0" vector-effect="non-scaling-stroke" />
<path d="M705 470C715 430 760 405 810 415L825 430V555L790 585H700" vector-effect="non-scaling-stroke" />
<path d="M740 480C750 440 780 425 800 430" vector-effect="non-scaling-stroke" />
<path d="M825 430L790 450V585" vector-effect="non-scaling-stroke" />
<path d="M620 440V520L700 585V470" vector-effect="non-scaling-stroke" />
<path d="M560 430H577" vector-effect="non-scaling-stroke" />
<path d="M585 440C575 600 590 700 592 865" vector-effect="non-scaling-stroke" stroke-width='1.04' />
<path d="M745 480C738 600 748 700 748 865" vector-effect="non-scaling-stroke" stroke-width='1.04' />
<path d="M650 590V865" vector-effect="non-scaling-stroke" />
<path d="M1040 350V430L950 400" vector-effect="non-scaling-stroke" />
<path d="M1153 375L1000 455C960 480 960 560 975 600C990 680 1050 720 1153 700" vector-effect="non-scaling-stroke" />
<path d="M1153 500L1010 570M985 590C1000 560 1100 540 1153 560" vector-effect="non-scaling-stroke" />
<path d="M935 640C950 720 1000 740 1153 735" vector-effect="non-scaling-stroke" />
<path d="M200 610L235 630L365 700L370 720L355 735L230 680" vector-effect="non-scaling-stroke" />
<path d="M205 610L232 632" vector-effect="non-scaling-stroke" stroke-width='0.80'/>
<path d="M222 742L355 735M222 742L640 830M222 742L225 770L560 865" vector-effect="non-scaling-stroke" />
<path d="M180 760L300 820" vector-effect="non-scaling-stroke" />
</g>
<g transform="translate(590,370) scale(0.10408)">
<path d="M140 865C140 700 150 520 185 430C215 380 270 330 340 290L420 235C480 190 540 140 600 135C680 130 720 165 785 185" vector-effect="non-scaling-stroke" />
<path d="M785 185C780 130 800 70 870 45C930 35 1000 50 1080 85L1120 140L1150 200L1085 270L1000 295C930 300 860 290 825 265C800 240 790 215 785 185" vector-effect="non-scaling-stroke" />
<path d="M745 70a28 17 15 1 0 55 12a28 17 15 1 0 -55 -12" vector-effect="non-scaling-stroke" />
<path d="M815 320C810 370 900 395 960 390C1030 385 1065 355 1050 320" vector-effect="non-scaling-stroke" />
<path d="M860 290C870 330 930 345 1000 330L1010 300" vector-effect="non-scaling-stroke" />
<path d="M855 380V440M895 380V440M853 440a22 14 0 1 0 44 0a22 14 0 1 0 -44 0M855 380a20 10 0 1 1 40 0" vector-effect="non-scaling-stroke" />
<path d="M862 440a12 8 0 1 0 24 0a12 8 0 1 0 -24 0" vector-effect="non-scaling-stroke" stroke-width='0.64'/>
<path d="M455 265L490 235L725 300L715 330L690 345Z" vector-effect="non-scaling-stroke" />
<path d="M470 262L700 325M480 250L715 315" vector-effect="non-scaling-stroke" />
<path d="M725 300L760 335L830 275" vector-effect="non-scaling-stroke" />
<path d="M420 235L455 265" vector-effect="non-scaling-stroke" />
<path d="M255 350C300 330 350 340 385 365" vector-effect="non-scaling-stroke" />
<path d="M262 350L385 362" vector-effect="non-scaling-stroke" stroke-width='0.80' stroke='#333'/>
<path d="M265 385C300 440 400 490 540 530" vector-effect="non-scaling-stroke" />
<path d="M385 365V470" vector-effect="non-scaling-stroke" stroke-width='0.88' stroke='#555'/>
<path d="M400 395L500 400C520 410 530 430 535 530" vector-effect="non-scaling-stroke" stroke-width='0.80' stroke='#555'/>
<path d="M405 460L465 410M400 395L440 345" vector-effect="non-scaling-stroke" />
<path d="M545 400L610 350" vector-effect="non-scaling-stroke" stroke-width='0.80' stroke='#444'/>
<path d="M545 400V520" vector-effect="non-scaling-stroke" />
<path d="M560 398L1153 592" vector-effect="non-scaling-stroke" stroke-width='1.04'  stroke='#222'/>
<path d="M610 350L1153 520" vector-effect="non-scaling-stroke" />
<path d="M560 425L1153 615" vector-effect="non-scaling-stroke" />
<path d="M540 530C700 600 950 690 1153 690" vector-effect="non-scaling-stroke" />
<path d="M408 530V610" vector-effect="non-scaling-stroke" stroke-width='0.72'/>
<path d="M408 610C395 640 400 660 415 665" vector-effect="non-scaling-stroke" />
<path d="M505 560V640" vector-effect="non-scaling-stroke" stroke-width='0.72'/>
<path d="M535 580V620" vector-effect="non-scaling-stroke" />
<path d="M440 680C440 740 400 790 360 820M480 690C480 760 430 800 400 830" vector-effect="non-scaling-stroke" />
<path d="M510 650L545 625L690 675L655 700M510 650V735L580 760V680L510 650M580 680L615 655M580 760L655 780V700L580 680M690 675V745L655 780" vector-effect="non-scaling-stroke" />
<path d="M705 865V740L770 685L780 700L1130 800L1140 865" vector-effect="non-scaling-stroke" />
<path d="M770 685V700" vector-effect="non-scaling-stroke" stroke-width='0.80'/>
<path d="M728 765a12 14 0 1 0 24 0a12 14 0 1 0 -24 0M788 775a12 14 0 1 0 24 0a12 14 0 1 0 -24 0" vector-effect="non-scaling-stroke" />
<path d="M880 770L910 750M920 800L950 830M1030 820L1040 850" vector-effect="non-scaling-stroke" stroke-width='0.88'/>
<path d="M20 780L370 825" vector-effect="non-scaling-stroke" />
<path d="M300 865C320 845 360 840 390 850" vector-effect="non-scaling-stroke" />
<path d="M545 845L640 830L650 865" vector-effect="non-scaling-stroke" stroke-width='1.40' />
<path d="M1050 410C1070 380 1120 350 1153 345M1085 440L1153 400" vector-effect="non-scaling-stroke" />
<path d="M500 770L540 740M500 770V830" vector-effect="non-scaling-stroke" />
</g>
<g transform="translate(590,450) scale(0.10408)">
<path d="M140 0C135 150 125 300 112 430V810" vector-effect="non-scaling-stroke" />
<path d="M295 130C300 55 500 50 505 125C500 200 300 200 295 130" vector-effect="non-scaling-stroke" />
<path d="M295 200C310 265 490 265 505 200" vector-effect="non-scaling-stroke" />
<path d="M295 130V380M505 125V330" vector-effect="non-scaling-stroke" />
<path d="M300 375C330 420 470 420 500 360" vector-effect="non-scaling-stroke" />
<path d="M382 125a18 12 0 1 0 36 0a18 12 0 1 0 -36 0M398 113L385 75M418 123L490 105M410 137L440 185M384 130L310 160M330 85L385 118" vector-effect="non-scaling-stroke" />
<path d="M205 385L290 320M505 310L585 335V400L440 520L215 455L205 385" vector-effect="non-scaling-stroke" />
<path d="M210 390L440 455L585 335M440 455V520" vector-effect="non-scaling-stroke" />
<path d="M232 395V440M282 405V440M230 395a26 12 0 1 0 52 5a26 12 0 1 0 -52 -5M232 440C245 455 270 455 282 440" vector-effect="non-scaling-stroke" />
<path d="M242 450V575M272 455V565" vector-effect="non-scaling-stroke" stroke='#444'/>
<path d="M272 560L335 510L350 530L290 580" vector-effect="non-scaling-stroke" />
<path d="M265 580V810C300 865 480 865 535 830V490" vector-effect="non-scaling-stroke" />
<path d="M282 600V800" vector-effect="non-scaling-stroke" stroke='#777'/>
<path d="M112 430C115 500 200 560 300 600L760 742" vector-effect="non-scaling-stroke" stroke-width='0.88' />
<path d="M114 455C125 515 210 575 300 612" vector-effect="non-scaling-stroke" />
<path d="M545 50V130M585 45V135M625 55V130" vector-effect="non-scaling-stroke" stroke-width='1.44'/>
<path d="M530 60C540 40 640 40 650 75V120" vector-effect="non-scaling-stroke" />
<path d="M520 140L720 210L745 190V225L720 240L520 170ZM520 155L720 225" vector-effect="non-scaling-stroke" />
<path d="M705 0V150L745 190" vector-effect="non-scaling-stroke" />
<path d="M760 175L790 135L985 195V250L940 285L750 225V180M790 135L760 175L940 230L985 195M940 230V285" vector-effect="non-scaling-stroke" />
<path d="M985 250L1090 285L1140 245V40L1100 70V280M940 0L1140 40M1100 70L900 15" vector-effect="non-scaling-stroke" />
<path d="M722 95a13 16 0 1 0 26 0a13 16 0 1 0 -26 0M1022 75a13 16 0 1 0 26 0a13 16 0 1 0 -26 0M1047 205a13 16 0 1 0 26 0a13 16 0 1 0 -26 0" vector-effect="non-scaling-stroke" />
<path d="M940 50L975 95M790 0L810 20M735 0L745 12" vector-effect="non-scaling-stroke" stroke-width='0.88'/>
<path d="M950 115L1153 200" vector-effect="non-scaling-stroke" />
<path d="M825 600L730 865" vector-effect="non-scaling-stroke" />
<path d="M1090 535L1153 565" vector-effect="non-scaling-stroke" />
</g>
<g transform="translate(590,530) scale(0.10408)">
<path d="M265 0V40C300 100 480 100 535 55V0" vector-effect="non-scaling-stroke" />
<path d="M100 95L110 300C115 380 160 410 210 430L760 610C850 640 950 660 1050 665L1153 660" vector-effect="non-scaling-stroke" />
<path d="M100 95C130 160 200 200 300 240L800 395C900 420 1000 430 1100 410L1153 390" vector-effect="non-scaling-stroke" stroke-width='0.88' />
<path d="M105 120C135 185 210 225 300 258" vector-effect="non-scaling-stroke" />
<path d="M285 130L320 105L460 110M285 130L270 230M470 105V200L485 210V250M320 105L390 165L460 110M390 165L330 300M285 130L390 165" vector-effect="non-scaling-stroke" />
<path d="M245 250L225 290V340L250 330M250 345L335 385M270 365L345 400M275 310L330 320M330 300V390" vector-effect="non-scaling-stroke" />
<path d="M330 300C330 360 350 400 370 400C420 390 450 330 440 290" vector-effect="non-scaling-stroke" />
<path d="M355 350C380 340 420 300 425 290M350 370C390 360 430 320 435 300" vector-effect="non-scaling-stroke" />
<path d="M855 100V215L930 410M1020 240L960 300L925 380" vector-effect="non-scaling-stroke" />
<path d="M1153 290C1120 310 1090 360 1085 410" vector-effect="non-scaling-stroke" />
<path d="M1153 400C1100 400 1065 450 1065 510C1065 580 1100 640 1153 645" vector-effect="non-scaling-stroke" />
<path d="M1153 430C1120 430 1100 470 1100 510C1100 540 1120 560 1153 560" vector-effect="non-scaling-stroke" />
<path d="M920 420C910 500 930 570 960 590L1080 630" vector-effect="non-scaling-stroke" />
</g>
<g transform="translate(700,450) scale(0.10408)">
<path d="M270 0C275 200 270 400 250 520C240 570 225 600 215 620" vector-effect="non-scaling-stroke" />
<path d="M335 0C330 100 335 300 340 500C345 600 340 700 330 865" vector-effect="non-scaling-stroke" />
<path d="M215 620C280 650 330 760 370 865" vector-effect="non-scaling-stroke" />
<path d="M490 0V160" vector-effect="non-scaling-stroke" />
<path d="M520 0V865" vector-effect="non-scaling-stroke" />
<path d="M543 0V865" vector-effect="non-scaling-stroke" stroke-width='0.96' stroke='#8a8a8a'/>
<path d="M560 30V560M640 80V410" vector-effect="non-scaling-stroke" />
<path d="M560 30L770 50L780 0M570 0L740 20L745 0" vector-effect="non-scaling-stroke" />
<path d="M770 50C790 90 830 120 900 125C960 125 1010 110 1030 90V0" vector-effect="non-scaling-stroke" />
<path d="M1030 90C1060 150 1070 300 1040 380C1010 440 900 470 830 440L790 400" vector-effect="non-scaling-stroke" />
<path d="M1125 0C1150 150 1140 300 1100 390C1050 470 900 500 800 460L790 400" vector-effect="non-scaling-stroke" />
<path d="M860 125V400" vector-effect="non-scaling-stroke" />
<path d="M1015 110C1045 200 1040 330 1000 390C960 430 880 440 830 410" vector-effect="non-scaling-stroke" />
<path d="M780 400V590C800 640 900 680 1000 670L1020 690V730L1153 620" vector-effect="non-scaling-stroke" />
<path d="M790 600C820 650 900 690 990 685" vector-effect="non-scaling-stroke" />
<path d="M560 580L770 580L600 750L560 740Z" vector-effect="non-scaling-stroke" fill='#b5b5b5' stroke-width='0.32'/>
<path d="M575 600L720 600M570 630L690 630M570 660L660 660M570 690L630 690M600 585L600 740M640 585L640 700M690 585L690 660" vector-effect="non-scaling-stroke" stroke='#fff' stroke-width='0.28'/>
<path d="M770 560L782 592" vector-effect="non-scaling-stroke" stroke-width='0.80'/>
<path d="M770 590L590 760" vector-effect="non-scaling-stroke" />
<path d="M1000 680L740 865" vector-effect="non-scaling-stroke" stroke-width='0.88' stroke='#666'/>
<path d="M1153 620L900 840" vector-effect="non-scaling-stroke" stroke-width='0.60'/>
<path d="M545 865L560 820" vector-effect="non-scaling-stroke" />
<path d="M0 0L80 40V245L35 280L0 270M35 70V280M0 55L35 70L80 40" vector-effect="non-scaling-stroke" />
</g>
<g transform="translate(700,530) scale(0.10408)">
<path d="M320 0C310 100 260 250 180 330" vector-effect="non-scaling-stroke" />
<path d="M345 0V490M345 400L540 260V340L345 490" vector-effect="non-scaling-stroke" />
<path d="M345 405V488M540 265V338" vector-effect="non-scaling-stroke" stroke-width='0.80'/>
<path d="M520 0V260M560 0V240" vector-effect="non-scaling-stroke" />
<path d="M543 0V250" vector-effect="non-scaling-stroke" stroke-width='0.96' stroke='#8a8a8a'/>
<path d="M565 240L870 0" vector-effect="non-scaling-stroke" stroke-width='0.88' stroke='#777'/>
<path d="M540 340L985 0" vector-effect="non-scaling-stroke" stroke-width='0.60'/>
<path d="M0 665C100 660 200 620 330 520L540 340" vector-effect="non-scaling-stroke" />
<path d="M25 400C60 330 150 320 160 400C170 480 110 580 60 560C20 550 0 470 25 400" vector-effect="non-scaling-stroke" />
<path d="M10 380C50 290 190 280 200 390C205 500 130 620 50 610" vector-effect="non-scaling-stroke" />
<path d="M60 405L75 560" vector-effect="non-scaling-stroke" />
<path d="M90 395L150 372" vector-effect="non-scaling-stroke" stroke-width='0.80' stroke='#666'/>
</g>
<g transform="translate(770,340) scale(0.10408)">
<path d="M545 0V865" vector-effect="non-scaling-stroke" stroke-width='0.60'/>
<path d="M580 0V865" vector-effect="non-scaling-stroke" />
<path d="M480 0V190M515 0V195" vector-effect="non-scaling-stroke" />
<path d="M40 0C100 20 130 50 125 90L110 330C110 400 130 480 160 510" vector-effect="non-scaling-stroke" />
<path d="M270 0L215 160L125 135M215 160V240" vector-effect="non-scaling-stroke" />
<path d="M385 0V150" vector-effect="non-scaling-stroke" stroke='#888'/>
<path d="M215 245L385 155L470 185M150 290L350 205L385 240M150 290L160 380L350 310L355 205M350 310C340 350 350 390 380 400" vector-effect="non-scaling-stroke" />
<path d="M160 380C130 420 130 500 190 530C250 550 330 530 370 480C390 440 400 420 410 400" vector-effect="non-scaling-stroke" />
<path d="M170 385C230 350 310 360 345 400" vector-effect="non-scaling-stroke" />
<path d="M385 270C400 220 450 190 490 200L530 230M385 270C370 330 380 390 400 400L520 320L530 230" vector-effect="non-scaling-stroke" />
<path d="M400 300C410 250 440 230 455 245C465 290 440 360 410 370C400 360 395 330 400 300" vector-effect="non-scaling-stroke" />
<path d="M430 250V340M410 300H450" vector-effect="non-scaling-stroke" stroke-width='0.72'/>
<path d="M385 500C420 470 480 450 530 440V250" vector-effect="non-scaling-stroke" />
<path d="M355 510V865M385 520L430 865M130 540L110 680V865M95 740V865M0 690L95 745" vector-effect="non-scaling-stroke" />
<path d="M455 650C445 700 450 740 465 745C485 730 485 680 470 650" vector-effect="non-scaling-stroke" />
</g>
<g transform="translate(770,420) scale(0.10408)">
<path d="M545 0V870" vector-effect="non-scaling-stroke" stroke-width='0.60'/>
<path d="M583 0V775L545 805" vector-effect="non-scaling-stroke" />
<path d="M95 0V300M118 0V300M430 0C445 100 460 200 462 290" vector-effect="non-scaling-stroke" />
<path d="M357 0V290" vector-effect="non-scaling-stroke" stroke='#777'/>
</g>
<g transform="translate(0,0) scale(1.00000)">
<path d="M830.7 375.3L972.7 274.1L975.8 276.1L975.8 282.2L942.0 323.7L830.7 406.6" vector-effect="non-scaling-stroke" />
<path d="M975.8 276.1L941.4 318.0L830.7 398.6" vector-effect="non-scaling-stroke" />
<path d="M973.9 274.9L939.3 316.6L830.7 395.7" vector-effect="non-scaling-stroke" />
<path d="M941.4 318.0L942.0 323.7" vector-effect="non-scaling-stroke" />
<path d="M832.4 453.1L1044.6 297.4L1047.6 295.4L1050.2 298.4L1050.2 304.5L1015.8 345.5L832.4 488.7" vector-effect="non-scaling-stroke" />
<path d="M1050.2 298.4L1015.2 339.5L832.4 478.2" vector-effect="non-scaling-stroke" />
<path d="M1048.4 296.6L1013.2 338.3L832.4 475.6" vector-effect="non-scaling-stroke" />
<path d="M1015.2 339.5L1015.8 345.5" vector-effect="non-scaling-stroke" />
<path d="M892.8 332.8L898.9 329.4L903.6 330.8L897.6 334.5ZM897.6 334.5L903.6 330.8L908.4 332.2L902.5 336.2Z" vector-effect="non-scaling-stroke" />
<path d="M875.2 344.9L880.6 341.5L887.2 343.5L881.7 347.5ZM881.7 347.5L887.2 343.5L893.8 345.5L888.1 350.0Z" vector-effect="non-scaling-stroke" />
<path d="M966.7 355.0L973.7 352.0L978.5 353.5L971.7 357.3ZM971.7 357.3L978.5 353.5L983.2 355.0L976.8 359.5Z" vector-effect="non-scaling-stroke" />
<path d="M948.8 367.2L955.5 363.8L961.9 366.0L955.5 369.9ZM955.5 369.9L961.9 366.0L968.3 368.2L962.2 372.7Z" vector-effect="non-scaling-stroke" />
</g>
<g transform="translate(700,395) scale(0.10408)">
<path d="M160 15L445 92" vector-effect="non-scaling-stroke" stroke-width='0.64'/>
<path d="M445 95L760 215V560L560 545M560 100L760 215" vector-effect="non-scaling-stroke" />
<path d="M0 140C40 105 90 95 130 100L385 178C415 192 412 225 392 248L330 298C308 315 280 312 250 303L0 222" vector-effect="non-scaling-stroke" />
<path d="M35 200C60 170 95 152 135 158L345 222C370 232 368 250 350 262L320 285" vector-effect="non-scaling-stroke" />
<path d="M0 80C50 52 60 50 90 55L400 150C480 175 540 220 550 300V320" vector-effect="non-scaling-stroke" />
<path d="M310 340L470 385M90 470L250 525" vector-effect="non-scaling-stroke" />
<path d="M0 240L180 310C260 340 310 400 330 470L340 540" vector-effect="non-scaling-stroke" />
<path d="M0 290C100 330 200 380 250 440C270 480 280 520 278 540" vector-effect="non-scaling-stroke" />
<path d="M0 322L200 402" vector-effect="non-scaling-stroke" stroke-width='0.96' />
<path d="M0 440C80 440 160 430 200 410" vector-effect="non-scaling-stroke" />
<path d="M345 470L500 350L520 340M345 500L515 365M345 470V540" vector-effect="non-scaling-stroke" />
<path d="M520 340V540" vector-effect="non-scaling-stroke" stroke-width='0.72'/>
<path d="M423 485a12 20 0 1 0 24 0a12 20 0 1 0 -24 0" vector-effect="non-scaling-stroke" />
<path d="M485 300C490 270 500 260 505 270L540 320L520 340L485 330ZM485 330V540M545 320V540" vector-effect="non-scaling-stroke" />
<path d="M440 0V300" vector-effect="non-scaling-stroke" stroke-width='1.20' />
<path d="M600 20V345" vector-effect="non-scaling-stroke" stroke-width='1.36' />
<path d="M505 0V270M640 0V530" vector-effect="non-scaling-stroke" />
<path d="M560 440L740 520V545M560 540C650 570 720 580 790 580" vector-effect="non-scaling-stroke" />
<path d="M800 0C790 50 790 100 795 150V590C830 650 960 670 1030 630L1040 0" vector-effect="non-scaling-stroke" />
<path d="M1065 0C1090 200 1130 400 1140 540" vector-effect="non-scaling-stroke" />
<path d="M1130 120C1125 170 1130 210 1145 215L1150 120" vector-effect="non-scaling-stroke" />
<path d="M0 545L75 575M35 600L0 590" vector-effect="non-scaling-stroke" />
</g>
<g transform="translate(660,480) scale(0.08673)">
<path d="M75 150C80 55 290 55 295 150C290 235 85 240 75 150" vector-effect="non-scaling-stroke" />
<path d="M72 225C100 305 260 305 296 225" vector-effect="non-scaling-stroke" stroke-width='2.60' stroke='#333' stroke-linecap='butt'/>
<path d="M85 205V290M110 225V305M135 235V312M160 240V316M185 242V318M210 240V316M235 235V312M260 225V305M282 210V290" vector-effect="non-scaling-stroke" stroke='#fff' stroke-width='0.22'/>
<path d="M58 160V260M302 160V250" vector-effect="non-scaling-stroke" />
<path d="M80 300V400C110 440 250 440 270 400V300" vector-effect="non-scaling-stroke" />
<path d="M60 460C65 425 95 415 110 422M60 460C80 520 250 530 275 470V440M60 460V500" vector-effect="non-scaling-stroke" />
<path d="M62 500C90 575 240 590 272 520" vector-effect="non-scaling-stroke" />
<path d="M80 545C130 590 230 590 270 545" vector-effect="non-scaling-stroke" stroke-width='0.96' stroke='#444'/>
<path d="M100 590V640C130 670 230 670 255 640V590" vector-effect="non-scaling-stroke" />
<path d="M120 650V720L200 745V668" vector-effect="non-scaling-stroke" />
<path d="M125 690L200 712" vector-effect="non-scaling-stroke" stroke-width='1.60'/>
<path d="M120 740L200 770V830L120 800ZM120 770L200 800" vector-effect="non-scaling-stroke" />
<path d="M320 180C325 110 400 88 490 90C580 92 645 125 650 190" vector-effect="non-scaling-stroke" />
<path d="M385 175a100 55 0 1 0 200 0a100 55 0 1 0 -200 0M425 175a60 33 0 1 0 120 0a60 33 0 1 0 -120 0" vector-effect="non-scaling-stroke" />
<path d="M320 180V300M650 190V300" vector-effect="non-scaling-stroke" />
<path d="M400 250H575V330M400 250V335M320 300L400 335M575 330L655 300L700 332V480" vector-effect="non-scaling-stroke" />
<path d="M330 310L395 340" vector-effect="non-scaling-stroke" stroke-width='0.96'/>
<path d="M585 330L650 300" vector-effect="non-scaling-stroke" stroke-width='0.72'/>
<path d="M345 400C400 335 600 335 660 400" vector-effect="non-scaling-stroke" />
<path d="M300 340V680M320 345V690M345 400V700M365 380V705" vector-effect="non-scaling-stroke" />
<path d="M440 390V730M465 385V735M490 385V735M520 388V730M545 392V725" vector-effect="non-scaling-stroke" />
<path d="M610 365V690M640 375V670M665 400V655M690 340V640" vector-effect="non-scaling-stroke" />
<path d="M300 600C400 625 600 612 700 568" vector-effect="non-scaling-stroke" stroke-width='0.72' stroke='#555'/>
<path d="M250 640C300 760 650 780 740 620M235 700C300 820 680 830 750 680M260 760C350 865 650 865 760 720" vector-effect="non-scaling-stroke" />
<path d="M228 745C280 830 380 860 450 865" vector-effect="non-scaling-stroke" stroke-width='1.80' stroke='#222' stroke-linecap='butt'/>
</g>
<path d="M590.700 353.500L641 406.900M625.800 297.500L680.200 384M671.500 250L698.700 339.500M740.300 249.200L737.200 332.500M872 250L843.600 351.700L814.300 370M930 250.500L899.500 329.800M930 250.500L972.700 353.500M994.800 251L972.700 274.700M994.800 251L1047 295.800M961.800 431.500L757.200 395.400M839 527L689.300 461.800M808 549.300L762.400 515.900M783.900 571.100L749.100 516.400M763 587.100L728 517.700L703.800 505.800M736.900 605.400L707.600 530.400M716.500 628.300L708.500 571L686.500 559.500M674.600 628.300L681 589L695 587.600M633.900 627L675.100 512.600M587.600 605.400L619.900 558.400M592 541.900L628.800 523.600M592 490.500L631.400 487.200M592 451.600L654.200 459.200" vector-effect="non-scaling-stroke" stroke-width="0.35"/>
</g><!--endthumb12--><path d="M147.5 715.5h1M152.0 715.5h9M177.5 715.5h1.500M181.5 715.5h8" stroke="#c9c9c9" stroke-width="0.800"/><path d="M147.5 717.4h1M152.0 717.4h6M177.5 717.4h1.500M181.5 717.4h5" stroke="#c9c9c9" stroke-width="0.800"/><path d="M147.5 719.3h1M152.0 719.3h21M177.5 719.3h1.500M181.5 719.3h8" stroke="#c9c9c9" stroke-width="0.800"/><path d="M147.5 721.2h1M152.0 721.2h7M177.5 721.2h1.500M181.5 721.2h6" stroke="#c9c9c9" stroke-width="0.800"/><path d="M147.5 723.1h1M152.0 723.1h21M177.5 723.1h1.500M181.5 723.1h8" stroke="#c9c9c9" stroke-width="0.800"/><path d="M147.5 725.0h1M152.0 725.0h8M177.5 725.0h1.500M181.5 725.0h8" stroke="#c9c9c9" stroke-width="0.800"/><path d="M147.5 726.9h1M152.0 726.9h17M177.5 726.9h1.500M181.5 726.9h6" stroke="#c9c9c9" stroke-width="0.800"/>
<!-- thumb 13 -->
<rect x="138.500" y="805" width="80" height="51" fill="#fff" stroke="#dcdcdc" stroke-width="0.700"/>
<path d="M152 807.700h41.500l-2 3.100h-39.500z" fill="#f58220"/><path d="M193.500 807.700h17.300v3.100h-19.300z" fill="#c4c4c4"/><rect x="155" y="808.500" width="17" height="1.500" fill="#fbd9bd"/><rect x="189" y="811.300" width="21" height="1" fill="#888"/><rect x="155.300" y="815.200" width="3.500" height="1.700" fill="#111"/>
<g fill="none" stroke="#9a9a9a" stroke-width="0.500" opacity="0.800"><path d="M169.3 840.7L170.8 836.4M173.1 844.6L168.7 844.7M164.2 845.8L159.9 841.7M171.1 852.9L167.4 850.1M174.8 855.1L175.6 854.0M181.1 838.8L184.7 836.7M166.1 840.1L164.2 843.3M166.8 848.5L168.1 847.2M173.4 839.1L169.0 836.2M175.7 845.7L173.9 846.6M171.7 843.4L174.6 845.4M167.9 848.3L168.1 852.1M176.6 843.2L181.4 839.4M171.0 851.6L167.5 851.5M164.2 850.0L166.9 850.8M179.3 843.6L181.2 844.6M173.9 846.2L177.3 850.7M172.0 850.0L167.6 852.0M175.1 855.9L178.4 853.7M170.4 850.0L165.7 849.7M166.5 840.1L162.1 842.8M165.8 842.5L164.7 846.2M165.0 846.1L165.4 849.9M178.2 853.6L176.0 852.7M170.0 853.9L174.5 850.4M166.7 842.2L164.0 842.0M174.1 842.7L169.1 841.9M170.1 848.2L174.7 850.1M172.8 849.1L174.5 844.7M179.7 852.0L183.4 855.0M170.6 845.2L166.6 846.5M164.6 839.2L161.7 835.8M169.6 838.9L164.6 835.5M165.3 844.5L160.6 848.3M174.6 840.7L172.1 839.1M170.1 840.2L173.5 845.1M171.9 846.7L167.7 842.7M169.7 842.8L173.0 839.4M163.9 855.1L164.2 851.6M173.3 838.5L173.6 843.3M179.0 850.5L176.7 849.2M166.5 851.9L166.8 854.7M169.4 842.0L172.5 846.9M178.8 852.5L182.0 854.9M167.6 847.3L166.1 842.6M164.0 843.0L161.6 845.0M180.7 846.1L185.1 850.9M180.7 844.6L177.9 841.8M167.0 841.7L168.3 845.7M178.6 846.6L180.2 849.6M165.0 849.9L169.1 852.7M177.0 846.6L173.8 849.5M169.5 852.4L174.2 851.4M170.7 855.0L173.0 851.7M165.8 840.7L169.8 843.8M166.1 852.9L170.9 854.4M169.8 847.9L166.1 843.0M181.0 849.7L181.2 854.0M171.3 853.7L174.6 850.8M168.0 843.3L165.4 844.1"/><path d="M184.6 839.7L181.0 843.8M186.2 840.3L187.0 844.4M187.2 847.7L187.2 848.0M188.9 833.3L188.3 830.1M180.6 845.8L177.3 845.5M192.1 841.9L190.4 842.1M189.4 845.5L185.4 846.2M184.5 837.4L187.2 837.5M189.5 845.2L193.6 844.6M190.3 841.1L190.4 843.0M187.7 841.5L187.5 845.9M191.7 847.0L196.1 844.6M189.5 848.1L192.9 844.5M182.4 840.1L178.2 837.5M181.7 843.7L184.5 847.7M183.0 844.5L184.6 840.9M194.6 848.5L191.8 853.0M186.9 840.8L191.8 844.1M183.1 839.9L183.2 838.3M183.6 838.1L185.9 833.3M189.4 840.0L184.5 838.4M190.5 841.2L186.1 846.0M193.1 848.5L189.2 846.2M181.1 845.5L178.8 841.8M187.3 847.6L190.4 845.2M182.9 847.7L183.6 849.7M181.9 833.9L183.8 833.2M181.7 848.0L183.0 851.0M181.8 846.7L177.5 850.3M187.8 838.4L188.3 842.7"/><path d="M186.8 847.1L187.1 844.5M184.3 847.6L179.8 844.6M187.5 849.9L190.1 847.8M190.5 847.8L189.0 843.0M186.5 845.2L188.8 845.8M185.5 852.6L189.9 848.7M195.6 851.9L195.6 855.3M188.8 853.1L190.7 857.9M188.0 858.3L190.1 859.7M189.0 850.6L184.5 846.9M183.6 856.9L181.2 853.5M183.9 858.5L187.6 860.2M187.0 848.9L184.9 848.5M185.0 852.1L182.7 856.8M198.1 853.8L195.5 858.4M187.5 850.7L182.5 849.5M190.1 853.0L187.1 853.1M182.6 849.2L178.5 848.2M183.2 845.4L181.2 842.7M191.9 853.5L194.4 855.0M194.0 859.1L192.9 857.3M198.3 847.4L200.5 848.8M183.2 858.4L187.1 859.6M194.2 858.0L190.6 858.2M190.6 858.4L193.6 861.6M191.8 859.3L193.7 861.2M186.2 845.5L182.5 844.1M184.2 858.4L184.8 859.7M192.5 855.9L192.4 850.9M195.3 857.0L195.3 857.3"/><path d="M202.7 845.9L205.1 843.4M194.5 848.7L196.8 845.8M203.9 858.7L203.8 857.5M200.2 854.6L202.9 855.7M202.5 846.1L199.0 843.6M203.9 849.3L204.6 844.4M194.3 848.8L196.1 850.7M203.0 849.1L203.1 848.7M200.0 846.7L204.0 843.7M207.2 858.1L202.4 857.7M205.0 858.6L204.5 856.2M196.4 858.2L193.5 859.1M195.5 852.3L200.0 848.7M205.0 852.1L208.9 854.2M196.7 857.6L196.6 852.8M193.6 851.9L193.1 849.9M195.5 849.8L193.6 853.2M193.5 855.5L196.9 851.7M206.5 855.0L210.5 852.9M198.7 850.5L203.7 851.4M198.5 851.0L196.3 846.5M194.9 856.7L192.8 861.0M197.0 848.7L197.1 845.6M198.7 858.4L202.6 861.5M202.3 857.8L206.7 858.3M203.6 845.7L205.9 845.2M204.0 854.0L201.9 849.5M206.5 846.8L206.2 845.2M197.7 855.3L202.4 852.9M202.7 849.2L203.3 848.2M195.8 847.3L192.9 851.3M200.5 848.1L204.5 853.0M199.8 847.0L196.7 842.9M198.3 846.3L195.7 843.9M201.5 857.4L204.0 856.5"/><path d="M161.5 829l10 8M170.5 825l6 10M179.5 823l4 7M188.5 823v7M205.5 831l-8 4M205.5 841l-7 4M207.5 852l-6 1M157.5 841l8 2M157.5 849l8-3M158.5 857l9-6" stroke="#777"/><path d="M183.5 831c0-3 10-3 10 0v14c0 3-10 3-10 0z" stroke="#aaa"/></g>
<rect x="45" y="856" width="286" height="4" fill="#fafafa"/>
</svg>
<div id="splitter" class="abs"></div>
<div id="docarea" class="abs">
<div id="page" class="abs"></div>
</div>
<svg class="abs" style="left:350px;top:127px" width="889" height="733" viewBox="350 127 889 733" fill="none">
<path d="M560 151.300h146.200l15.700 27.100h-161.900z" fill="#c6c6c6"/>
<path d="M706 151.300h26v0.900h-25.500z" fill="#c6c6c6"/>
<path d="M706.200 151.300L721.900 178.400H1075V151.500H732v0.700h-25.300z" fill="#f58220"/>
<g id="truck" stroke="#111" stroke-width="1.100" stroke-linejoin="round" stroke-linecap="round">
<g transform="translate(690,255) scale(0.13877)">
<path d="M160 520V140Q160 85 215 75L940 300Q1010 325 1010 400V865" vector-effect="non-scaling-stroke" />
<path d="M185 495V145Q185 100 225 100L930 322Q985 340 985 400V865" vector-effect="non-scaling-stroke" />
<path d="M213 475V135L925 350Q962 365 962 410V775" vector-effect="non-scaling-stroke" />
<path d="M213 290L860 495" vector-effect="non-scaling-stroke" />
<path d="M275 320L213 368L780 545L860 495" vector-effect="non-scaling-stroke" />
<path d="M305 165L358 330" vector-effect="non-scaling-stroke" />
<path d="M785 320L835 478" vector-effect="non-scaling-stroke" />
<path d="M860 495L940 520" vector-effect="non-scaling-stroke" />
<path d="M860 495V720" vector-effect="non-scaling-stroke" />
<path d="M780 545L742 740V790" vector-effect="non-scaling-stroke" />
<path d="M742 740L672 715" vector-effect="non-scaling-stroke" />
<path d="M860 720L935 748" vector-effect="non-scaling-stroke" />
</g>
<g transform="translate(685,320) scale(0.10408)">
<path d="M185 465L195 330C205 230 250 120 345 62C420 45 520 75 600 95L845 170C900 195 935 225 945 265L935 420L945 640L955 750L940 865" vector-effect="non-scaling-stroke" />
<path d="M232 298C250 200 320 120 420 92L500 100" vector-effect="non-scaling-stroke" />
<path d="M265 75L145 150C130 170 150 200 130 265L60 380C45 420 60 450 100 465L185 465" vector-effect="non-scaling-stroke" />
<path d="M270 100L160 165C150 200 165 220 150 280L95 380C85 410 100 440 150 450" vector-effect="non-scaling-stroke" />
<path d="M250 75C245 95 270 100 270 80" vector-effect="non-scaling-stroke" />
<path d="M52 400V530" vector-effect="non-scaling-stroke" />
<path d="M322 215L395 150L600 130L590 225L572 275L495 245L345 255Z" vector-effect="non-scaling-stroke" />
<path d="M345 190L420 158L575 180L565 230" vector-effect="non-scaling-stroke" />
<path d="M395 195L520 215L530 180L560 185" vector-effect="non-scaling-stroke" stroke-width='1.6'/>
<path d="M680 158L840 215L825 300L800 385L790 360L655 300L650 220Z" vector-effect="non-scaling-stroke" />
<path d="M682 230L810 290L820 300M700 215L825 270" vector-effect="non-scaling-stroke" />
<path d="M682 232L700 262L805 312" vector-effect="non-scaling-stroke" stroke-width='1.5'/>
<path d="M560 430C570 380 620 345 680 360" vector-effect="non-scaling-stroke" />
<path d="M577 432C590 390 640 360 690 375" vector-effect="non-scaling-stroke" />
<path d="M620 440C625 400 660 380 700 390" vector-effect="non-scaling-stroke" />
<path d="M660 440a30 30 0 1 0 60 0a30 30 0 1 0 -60 0" vector-effect="non-scaling-stroke" />
<path d="M705 470C715 430 760 405 810 415L825 430V555L790 585H700" vector-effect="non-scaling-stroke" />
<path d="M740 480C750 440 780 425 800 430" vector-effect="non-scaling-stroke" />
<path d="M825 430L790 450V585" vector-effect="non-scaling-stroke" />
<path d="M620 440V520L700 585V470" vector-effect="non-scaling-stroke" />
<path d="M560 430H577" vector-effect="non-scaling-stroke" />
<path d="M585 440C575 600 590 700 592 865" vector-effect="non-scaling-stroke" stroke-width='2.6' stroke-dasharray='1.6 1.2'/>
<path d="M745 480C738 600 748 700 748 865" vector-effect="non-scaling-stroke" stroke-width='2.6' stroke-dasharray='1.6 1.2'/>
<path d="M650 590V865" vector-effect="non-scaling-stroke" />
<path d="M1040 350V430L950 400" vector-effect="non-scaling-stroke" />
<path d="M1153 375L1000 455C960 480 960 560 975 600C990 680 1050 720 1153 700" vector-effect="non-scaling-stroke" />
<path d="M1153 500L1010 570M985 590C1000 560 1100 540 1153 560" vector-effect="non-scaling-stroke" />
<path d="M935 640C950 720 1000 740 1153 735" vector-effect="non-scaling-stroke" />
<path d="M200 610L235 630L365 700L370 720L355 735L230 680" vector-effect="non-scaling-stroke" />
<path d="M205 610L232 632" vector-effect="non-scaling-stroke" stroke-width='2'/>
<path d="M222 742L355 735M222 742L640 830M222 742L225 770L560 865" vector-effect="non-scaling-stroke" />
<path d="M180 760L300 820" vector-effect="non-scaling-stroke" />
</g>
<g transform="translate(590,370) scale(0.10408)">
<path d="M140 865C140 700 150 520 185 430C215 380 270 330 340 290L420 235C480 190 540 140 600 135C680 130 720 165 785 185" vector-effect="non-scaling-stroke" />
<path d="M785 185C780 130 800 70 870 45C930 35 1000 50 1080 85L1120 140L1150 200L1085 270L1000 295C930 300 860 290 825 265C800 240 790 215 785 185" vector-effect="non-scaling-stroke" />
<path d="M745 70a28 17 15 1 0 55 12a28 17 15 1 0 -55 -12" vector-effect="non-scaling-stroke" />
<path d="M815 320C810 370 900 395 960 390C1030 385 1065 355 1050 320" vector-effect="non-scaling-stroke" />
<path d="M860 290C870 330 930 345 1000 330L1010 300" vector-effect="non-scaling-stroke" />
<path d="M855 380V440M895 380V440M853 440a22 14 0 1 0 44 0a22 14 0 1 0 -44 0M855 380a20 10 0 1 1 40 0" vector-effect="non-scaling-stroke" />
<path d="M862 440a12 8 0 1 0 24 0a12 8 0 1 0 -24 0" vector-effect="non-scaling-stroke" stroke-width='1.6'/>
<path d="M455 265L490 235L725 300L715 330L690 345Z" vector-effect="non-scaling-stroke" />
<path d="M470 262L700 325M480 250L715 315" vector-effect="non-scaling-stroke" />
<path d="M725 300L760 335L830 275" vector-effect="non-scaling-stroke" />
<path d="M420 235L455 265" vector-effect="non-scaling-stroke" />
<path d="M255 350C300 330 350 340 385 365" vector-effect="non-scaling-stroke" />
<path d="M262 350L385 362" vector-effect="non-scaling-stroke" stroke-width='2' stroke='#333'/>
<path d="M265 385C300 440 400 490 540 530" vector-effect="non-scaling-stroke" />
<path d="M385 365V470" vector-effect="non-scaling-stroke" stroke-width='2.2' stroke='#555'/>
<path d="M400 395L500 400C520 410 530 430 535 530" vector-effect="non-scaling-stroke" stroke-width='2' stroke='#555'/>
<path d="M405 460L465 410M400 395L440 345" vector-effect="non-scaling-stroke" />
<path d="M545 400L610 350" vector-effect="non-scaling-stroke" stroke-width='2' stroke='#444'/>
<path d="M545 400V520" vector-effect="non-scaling-stroke" />
<path d="M560 398L1153 592" vector-effect="non-scaling-stroke" stroke-width='2.6' stroke-dasharray='1.5 1.3' stroke='#222'/>
<path d="M610 350L1153 520" vector-effect="non-scaling-stroke" />
<path d="M560 425L1153 615" vector-effect="non-scaling-stroke" />
<path d="M540 530C700 600 950 690 1153 690" vector-effect="non-scaling-stroke" />
<path d="M408 530V610" vector-effect="non-scaling-stroke" stroke-width='1.8'/>
<path d="M408 610C395 640 400 660 415 665" vector-effect="non-scaling-stroke" />
<path d="M505 560V640" vector-effect="non-scaling-stroke" stroke-width='1.8'/>
<path d="M535 580V620" vector-effect="non-scaling-stroke" />
<path d="M440 680C440 740 400 790 360 820M480 690C480 760 430 800 400 830" vector-effect="non-scaling-stroke" />
<path d="M510 650L545 625L690 675L655 700M510 650V735L580 760V680L510 650M580 680L615 655M580 760L655 780V700L580 680M690 675V745L655 780" vector-effect="non-scaling-stroke" />
<path d="M705 865V740L770 685L780 700L1130 800L1140 865" vector-effect="non-scaling-stroke" />
<path d="M770 685V700" vector-effect="non-scaling-stroke" stroke-width='2'/>
<path d="M728 765a12 14 0 1 0 24 0a12 14 0 1 0 -24 0M788 775a12 14 0 1 0 24 0a12 14 0 1 0 -24 0" vector-effect="non-scaling-stroke" />
<path d="M880 770L910 750M920 800L950 830M1030 820L1040 850" vector-effect="non-scaling-stroke" stroke-width='2.2'/>
<path d="M20 780L370 825" vector-effect="non-scaling-stroke" />
<path d="M300 865C320 845 360 840 390 850" vector-effect="non-scaling-stroke" />
<path d="M545 845L640 830L650 865" vector-effect="non-scaling-stroke" stroke-width='3.5' stroke-dasharray='2 1.5'/>
<path d="M1050 410C1070 380 1120 350 1153 345M1085 440L1153 400" vector-effect="non-scaling-stroke" />
<path d="M500 770L540 740M500 770V830" vector-effect="non-scaling-stroke" />
</g>
<g transform="translate(590,450) scale(0.10408)">
<path d="M140 0C135 150 125 300 112 430V810" vector-effect="non-scaling-stroke" />
<path d="M295 130C300 55 500 50 505 125C500 200 300 200 295 130" vector-effect="non-scaling-stroke" />
<path d="M295 200C310 265 490 265 505 200" vector-effect="non-scaling-stroke" />
<path d="M295 130V380M505 125V330" vector-effect="non-scaling-stroke" />
<path d="M300 375C330 420 470 420 500 360" vector-effect="non-scaling-stroke" />
<path d="M382 125a18 12 0 1 0 36 0a18 12 0 1 0 -36 0M398 113L385 75M418 123L490 105M410 137L440 185M384 130L310 160M330 85L385 118" vector-effect="non-scaling-stroke" />
<path d="M205 385L290 320M505 310L585 335V400L440 520L215 455L205 385" vector-effect="non-scaling-stroke" />
<path d="M210 390L440 455L585 335M440 455V520" vector-effect="non-scaling-stroke" />
<path d="M232 395V440M282 405V440M230 395a26 12 0 1 0 52 5a26 12 0 1 0 -52 -5M232 440C245 455 270 455 282 440" vector-effect="non-scaling-stroke" />
<path d="M242 450V575M272 455V565" vector-effect="non-scaling-stroke" stroke='#444'/>
<path d="M272 560L335 510L350 530L290 580" vector-effect="non-scaling-stroke" />
<path d="M265 580V810C300 865 480 865 535 830V490" vector-effect="non-scaling-stroke" />
<path d="M282 600V800" vector-effect="non-scaling-stroke" stroke='#777'/>
<path d="M112 430C115 500 200 560 300 600L760 742" vector-effect="non-scaling-stroke" stroke-width='2.2' stroke-dasharray='1.6 1'/>
<path d="M114 455C125 515 210 575 300 612" vector-effect="non-scaling-stroke" />
<path d="M545 50V130M585 45V135M625 55V130" vector-effect="non-scaling-stroke" stroke-width='3.6'/>
<path d="M530 60C540 40 640 40 650 75V120" vector-effect="non-scaling-stroke" />
<path d="M520 140L720 210L745 190V225L720 240L520 170ZM520 155L720 225" vector-effect="non-scaling-stroke" />
<path d="M705 0V150L745 190" vector-effect="non-scaling-stroke" />
<path d="M760 175L790 135L985 195V250L940 285L750 225V180M790 135L760 175L940 230L985 195M940 230V285" vector-effect="non-scaling-stroke" />
<path d="M985 250L1090 285L1140 245V40L1100 70V280M940 0L1140 40M1100 70L900 15" vector-effect="non-scaling-stroke" />
<path d="M722 95a13 16 0 1 0 26 0a13 16 0 1 0 -26 0M1022 75a13 16 0 1 0 26 0a13 16 0 1 0 -26 0M1047 205a13 16 0 1 0 26 0a13 16 0 1 0 -26 0" vector-effect="non-scaling-stroke" />
<path d="M940 50L975 95M790 0L810 20M735 0L745 12" vector-effect="non-scaling-stroke" stroke-width='2.2'/>
<path d="M950 115L1153 200" vector-effect="non-scaling-stroke" />
<path d="M825 600L730 865" vector-effect="non-scaling-stroke" />
<path d="M1090 535L1153 565" vector-effect="non-scaling-stroke" />
</g>
<g transform="translate(590,530) scale(0.10408)">
<path d="M265 0V40C300 100 480 100 535 55V0" vector-effect="non-scaling-stroke" />
<path d="M100 95L110 300C115 380 160 410 210 430L760 610C850 640 950 660 1050 665L1153 660" vector-effect="non-scaling-stroke" />
<path d="M100 95C130 160 200 200 300 240L800 395C900 420 1000 430 1100 410L1153 390" vector-effect="non-scaling-stroke" stroke-width='2.2' stroke-dasharray='1.6 1'/>
<path d="M105 120C135 185 210 225 300 258" vector-effect="non-scaling-stroke" />
<path d="M285 130L320 105L460 110M285 130L270 230M470 105V200L485 210V250M320 105L390 165L460 110M390 165L330 300M285 130L390 165" vector-effect="non-scaling-stroke" />
<path d="M245 250L225 290V340L250 330M250 345L335 385M270 365L345 400M275 310L330 320M330 300V390" vector-effect="non-scaling-stroke" />
<path d="M330 300C330 360 350 400 370 400C420 390 450 330 440 290" vector-effect="non-scaling-stroke" />
<path d="M355 350C380 340 420 300 425 290M350 370C390 360 430 320 435 300" vector-effect="non-scaling-stroke" />
<path d="M855 100V215L930 410M1020 240L960 300L925 380" vector-effect="non-scaling-stroke" />
<path d="M1153 290C1120 310 1090 360 1085 410" vector-effect="non-scaling-stroke" />
<path d="M1153 400C1100 400 1065 450 1065 510C1065 580 1100 640 1153 645" vector-effect="non-scaling-stroke" />
<path d="M1153 430C1120 430 1100 470 1100 510C1100 540 1120 560 1153 560" vector-effect="non-scaling-stroke" />
<path d="M920 420C910 500 930 570 960 590L1080 630" vector-effect="non-scaling-stroke" />
</g>
<g transform="translate(700,450) scale(0.10408)">
<path d="M270 0C275 200 270 400 250 520C240 570 225 600 215 620" vector-effect="non-scaling-stroke" />
<path d="M335 0C330 100 335 300 340 500C345 600 340 700 330 865" vector-effect="non-scaling-stroke" />
<path d="M215 620C280 650 330 760 370 865" vector-effect="non-scaling-stroke" />
<path d="M490 0V160" vector-effect="non-scaling-stroke" />
<path d="M520 0V865" vector-effect="non-scaling-stroke" />
<path d="M543 0V865" vector-effect="non-scaling-stroke" stroke-width='2.4' stroke='#8a8a8a'/>
<path d="M560 30V560M640 80V410" vector-effect="non-scaling-stroke" />
<path d="M560 30L770 50L780 0M570 0L740 20L745 0" vector-effect="non-scaling-stroke" />
<path d="M770 50C790 90 830 120 900 125C960 125 1010 110 1030 90V0" vector-effect="non-scaling-stroke" />
<path d="M1030 90C1060 150 1070 300 1040 380C1010 440 900 470 830 440L790 400" vector-effect="non-scaling-stroke" />
<path d="M1125 0C1150 150 1140 300 1100 390C1050 470 900 500 800 460L790 400" vector-effect="non-scaling-stroke" />
<path d="M860 125V400" vector-effect="non-scaling-stroke" />
<path d="M1015 110C1045 200 1040 330 1000 390C960 430 880 440 830 410" vector-effect="non-scaling-stroke" />
<path d="M780 400V590C800 640 900 680 1000 670L1020 690V730L1153 620" vector-effect="non-scaling-stroke" />
<path d="M790 600C820 650 900 690 990 685" vector-effect="non-scaling-stroke" />
<path d="M560 580L770 580L600 750L560 740Z" vector-effect="non-scaling-stroke" fill='#b5b5b5' stroke-width='0.8'/>
<path d="M575 600L720 600M570 630L690 630M570 660L660 660M570 690L630 690M600 585L600 740M640 585L640 700M690 585L690 660" vector-effect="non-scaling-stroke" stroke='#fff' stroke-width='0.7'/>
<path d="M770 560L782 592" vector-effect="non-scaling-stroke" stroke-width='2'/>
<path d="M770 590L590 760" vector-effect="non-scaling-stroke" />
<path d="M1000 680L740 865" vector-effect="non-scaling-stroke" stroke-width='2.2' stroke='#666'/>
<path d="M1153 620L900 840" vector-effect="non-scaling-stroke" stroke-width='1.5'/>
<path d="M545 865L560 820" vector-effect="non-scaling-stroke" />
<path d="M0 0L80 40V245L35 280L0 270M35 70V280M0 55L35 70L80 40" vector-effect="non-scaling-stroke" />
</g>
<g transform="translate(700,530) scale(0.10408)">
<path d="M320 0C310 100 260 250 180 330" vector-effect="non-scaling-stroke" />
<path d="M345 0V490M345 400L540 260V340L345 490" vector-effect="non-scaling-stroke" />
<path d="M345 405V488M540 265V338" vector-effect="non-scaling-stroke" stroke-width='2'/>
<path d="M520 0V260M560 0V240" vector-effect="non-scaling-stroke" />
<path d="M543 0V250" vector-effect="non-scaling-stroke" stroke-width='2.4' stroke='#8a8a8a'/>
<path d="M565 240L870 0" vector-effect="non-scaling-stroke" stroke-width='2.2' stroke='#777'/>
<path d="M540 340L985 0" vector-effect="non-scaling-stroke" stroke-width='1.5'/>
<path d="M0 665C100 660 200 620 330 520L540 340" vector-effect="non-scaling-stroke" />
<path d="M25 400C60 330 150 320 160 400C170 480 110 580 60 560C20 550 0 470 25 400" vector-effect="non-scaling-stroke" />
<path d="M10 380C50 290 190 280 200 390C205 500 130 620 50 610" vector-effect="non-scaling-stroke" />
<path d="M60 405L75 560" vector-effect="non-scaling-stroke" />
<path d="M90 395L150 372" vector-effect="non-scaling-stroke" stroke-width='2' stroke='#666'/>
</g>
<g transform="translate(770,340) scale(0.10408)">
<path d="M545 0V865" vector-effect="non-scaling-stroke" stroke-width='1.5'/>
<path d="M580 0V865" vector-effect="non-scaling-stroke" />
<path d="M480 0V190M515 0V195" vector-effect="non-scaling-stroke" />
<path d="M40 0C100 20 130 50 125 90L110 330C110 400 130 480 160 510" vector-effect="non-scaling-stroke" />
<path d="M270 0L215 160L125 135M215 160V240" vector-effect="non-scaling-stroke" />
<path d="M385 0V150" vector-effect="non-scaling-stroke" stroke='#888'/>
<path d="M215 245L385 155L470 185M150 290L350 205L385 240M150 290L160 380L350 310L355 205M350 310C340 350 350 390 380 400" vector-effect="non-scaling-stroke" />
<path d="M160 380C130 420 130 500 190 530C250 550 330 530 370 480C390 440 400 420 410 400" vector-effect="non-scaling-stroke" />
<path d="M170 385C230 350 310 360 345 400" vector-effect="non-scaling-stroke" />
<path d="M385 270C400 220 450 190 490 200L530 230M385 270C370 330 380 390 400 400L520 320L530 230" vector-effect="non-scaling-stroke" />
<path d="M400 300C410 250 440 230 455 245C465 290 440 360 410 370C400 360 395 330 400 300" vector-effect="non-scaling-stroke" />
<path d="M430 250V340M410 300H450" vector-effect="non-scaling-stroke" stroke-width='1.8'/>
<path d="M385 500C420 470 480 450 530 440V250" vector-effect="non-scaling-stroke" />
<path d="M355 510V865M385 520L430 865M130 540L110 680V865M95 740V865M0 690L95 745" vector-effect="non-scaling-stroke" />
<path d="M455 650C445 700 450 740 465 745C485 730 485 680 470 650" vector-effect="non-scaling-stroke" />
</g>
<g transform="translate(770,420) scale(0.10408)">
<path d="M545 0V870" vector-effect="non-scaling-stroke" stroke-width='1.5'/>
<path d="M583 0V775L545 805" vector-effect="non-scaling-stroke" />
<path d="M95 0V300M118 0V300M430 0C445 100 460 200 462 290" vector-effect="non-scaling-stroke" />
<path d="M357 0V290" vector-effect="non-scaling-stroke" stroke='#777'/>
</g>
<g transform="translate(0,0) scale(1.00000)">
<path d="M830.7 375.3L972.7 274.1L975.8 276.1L975.8 282.2L942.0 323.7L830.7 406.6" vector-effect="non-scaling-stroke" />
<path d="M975.8 276.1L941.4 318.0L830.7 398.6" vector-effect="non-scaling-stroke" />
<path d="M973.9 274.9L939.3 316.6L830.7 395.7" vector-effect="non-scaling-stroke" />
<path d="M941.4 318.0L942.0 323.7" vector-effect="non-scaling-stroke" />
<path d="M832.4 453.1L1044.6 297.4L1047.6 295.4L1050.2 298.4L1050.2 304.5L1015.8 345.5L832.4 488.7" vector-effect="non-scaling-stroke" />
<path d="M1050.2 298.4L1015.2 339.5L832.4 478.2" vector-effect="non-scaling-stroke" />
<path d="M1048.4 296.6L1013.2 338.3L832.4 475.6" vector-effect="non-scaling-stroke" />
<path d="M1015.2 339.5L1015.8 345.5" vector-effect="non-scaling-stroke" />
<path d="M892.8 332.8L898.9 329.4L903.6 330.8L897.6 334.5ZM897.6 334.5L903.6 330.8L908.4 332.2L902.5 336.2Z" vector-effect="non-scaling-stroke" />
<path d="M875.2 344.9L880.6 341.5L887.2 343.5L881.7 347.5ZM881.7 347.5L887.2 343.5L893.8 345.5L888.1 350.0Z" vector-effect="non-scaling-stroke" />
<path d="M966.7 355.0L973.7 352.0L978.5 353.5L971.7 357.3ZM971.7 357.3L978.5 353.5L983.2 355.0L976.8 359.5Z" vector-effect="non-scaling-stroke" />
<path d="M948.8 367.2L955.5 363.8L961.9 366.0L955.5 369.9ZM955.5 369.9L961.9 366.0L968.3 368.2L962.2 372.7Z" vector-effect="non-scaling-stroke" />
</g>
<g transform="translate(700,395) scale(0.10408)">
<path d="M160 15L445 92" vector-effect="non-scaling-stroke" stroke-width='1.6'/>
<path d="M445 95L760 215V560L560 545M560 100L760 215" vector-effect="non-scaling-stroke" />
<path d="M0 140C40 105 90 95 130 100L385 178C415 192 412 225 392 248L330 298C308 315 280 312 250 303L0 222" vector-effect="non-scaling-stroke" />
<path d="M35 200C60 170 95 152 135 158L345 222C370 232 368 250 350 262L320 285" vector-effect="non-scaling-stroke" />
<path d="M0 80C50 52 60 50 90 55L400 150C480 175 540 220 550 300V320" vector-effect="non-scaling-stroke" />
<path d="M310 340L470 385M90 470L250 525" vector-effect="non-scaling-stroke" stroke-dasharray='3 2'/>
<path d="M0 240L180 310C260 340 310 400 330 470L340 540" vector-effect="non-scaling-stroke" />
<path d="M0 290C100 330 200 380 250 440C270 480 280 520 278 540" vector-effect="non-scaling-stroke" />
<path d="M0 322L200 402" vector-effect="non-scaling-stroke" stroke-width='2.4' stroke-dasharray='1.5 1.2'/>
<path d="M0 440C80 440 160 430 200 410" vector-effect="non-scaling-stroke" />
<path d="M345 470L500 350L520 340M345 500L515 365M345 470V540" vector-effect="non-scaling-stroke" />
<path d="M520 340V540" vector-effect="non-scaling-stroke" stroke-width='1.8'/>
<path d="M423 485a12 20 0 1 0 24 0a12 20 0 1 0 -24 0" vector-effect="non-scaling-stroke" />
<path d="M485 300C490 270 500 260 505 270L540 320L520 340L485 330ZM485 330V540M545 320V540" vector-effect="non-scaling-stroke" />
<path d="M440 0V300" vector-effect="non-scaling-stroke" stroke-width='3' stroke-dasharray='1.6 1.2'/>
<path d="M600 20V345" vector-effect="non-scaling-stroke" stroke-width='3.4' stroke-dasharray='1.6 1.2'/>
<path d="M505 0V270M640 0V530" vector-effect="non-scaling-stroke" />
<path d="M560 440L740 520V545M560 540C650 570 720 580 790 580" vector-effect="non-scaling-stroke" />
<path d="M800 0C790 50 790 100 795 150V590C830 650 960 670 1030 630L1040 0" vector-effect="non-scaling-stroke" />
<path d="M1065 0C1090 200 1130 400 1140 540" vector-effect="non-scaling-stroke" />
<path d="M1130 120C1125 170 1130 210 1145 215L1150 120" vector-effect="non-scaling-stroke" />
<path d="M0 545L75 575M35 600L0 590" vector-effect="non-scaling-stroke" />
</g>
<g transform="translate(660,480) scale(0.08673)">
<path d="M75 150C80 55 290 55 295 150C290 235 85 240 75 150" vector-effect="non-scaling-stroke" />
<path d="M72 225C100 305 260 305 296 225" vector-effect="non-scaling-stroke" stroke-width='6.5' stroke='#333' stroke-linecap='butt'/>
<path d="M85 205V290M110 225V305M135 235V312M160 240V316M185 242V318M210 240V316M235 235V312M260 225V305M282 210V290" vector-effect="non-scaling-stroke" stroke='#fff' stroke-width='0.55'/>
<path d="M58 160V260M302 160V250" vector-effect="non-scaling-stroke" />
<path d="M80 300V400C110 440 250 440 270 400V300" vector-effect="non-scaling-stroke" />
<path d="M60 460C65 425 95 415 110 422M60 460C80 520 250 530 275 470V440M60 460V500" vector-effect="non-scaling-stroke" />
<path d="M62 500C90 575 240 590 272 520" vector-effect="non-scaling-stroke" />
<path d="M80 545C130 590 230 590 270 545" vector-effect="non-scaling-stroke" stroke-width='2.4' stroke='#444'/>
<path d="M100 590V640C130 670 230 670 255 640V590" vector-effect="non-scaling-stroke" />
<path d="M120 650V720L200 745V668" vector-effect="non-scaling-stroke" />
<path d="M125 690L200 712" vector-effect="non-scaling-stroke" stroke-width='4'/>
<path d="M120 740L200 770V830L120 800ZM120 770L200 800" vector-effect="non-scaling-stroke" />
<path d="M320 180C325 110 400 88 490 90C580 92 645 125 650 190" vector-effect="non-scaling-stroke" />
<path d="M385 175a100 55 0 1 0 200 0a100 55 0 1 0 -200 0M425 175a60 33 0 1 0 120 0a60 33 0 1 0 -120 0" vector-effect="non-scaling-stroke" />
<path d="M320 180V300M650 190V300" vector-effect="non-scaling-stroke" />
<path d="M400 250H575V330M400 250V335M320 300L400 335M575 330L655 300L700 332V480" vector-effect="non-scaling-stroke" />
<path d="M330 310L395 340" vector-effect="non-scaling-stroke" stroke-width='2.4'/>
<path d="M585 330L650 300" vector-effect="non-scaling-stroke" stroke-width='1.8'/>
<path d="M345 400C400 335 600 335 660 400" vector-effect="non-scaling-stroke" />
<path d="M300 340V680M320 345V690M345 400V700M365 380V705" vector-effect="non-scaling-stroke" />
<path d="M440 390V730M465 385V735M490 385V735M520 388V730M545 392V725" vector-effect="non-scaling-stroke" />
<path d="M610 365V690M640 375V670M665 400V655M690 340V640" vector-effect="non-scaling-stroke" />
<path d="M300 600C400 625 600 612 700 568" vector-effect="non-scaling-stroke" stroke-width='1.8' stroke='#555'/>
<path d="M250 640C300 760 650 780 740 620M235 700C300 820 680 830 750 680M260 760C350 865 650 865 760 720" vector-effect="non-scaling-stroke" />
<path d="M228 745C280 830 380 860 450 865" vector-effect="non-scaling-stroke" stroke-width='4.5' stroke='#222' stroke-linecap='butt'/>
</g>
</g><!--endtruck-->
<path d="M590.700 353.500L641 406.900M625.800 297.500L680.200 384M671.500 250L698.700 339.500M740.300 249.200L737.200 332.500M872 250L843.600 351.700L814.300 370M930 250.500L899.500 329.800M930 250.500L972.700 353.500M994.800 251L972.700 274.700M994.800 251L1047 295.800M961.800 431.500L757.200 395.400M839 527L689.300 461.800M808 549.300L762.400 515.900M783.900 571.100L749.100 516.400M763 587.100L728 517.700L703.800 505.800M736.900 605.400L707.600 530.400M716.500 628.300L708.500 571L686.500 559.500M674.600 628.300L681 589L695 587.600M633.900 627L675.100 512.600M587.600 605.400L619.900 558.400M592 541.900L628.800 523.600M592 490.500L631.400 487.200M592 451.600L654.200 459.200" stroke="#111" stroke-width="0.800"/>
<g font-family="'Liberation Sans',sans-serif" font-weight="700" font-size="13.800px" fill="#111" stroke="#111" stroke-width="0.450" stroke-linejoin="round" text-anchor="middle" letter-spacing="0.200"><text x="582.5" y="351.3">1</text><text x="622.7" y="296.2">2</text><text x="670.5" y="247.0">3</text><text x="739.5" y="247.0">4</text><text x="872.8" y="247.0">5</text><text x="930.5" y="247.0">6</text><text x="995.5" y="247.0">7</text><text x="970.4" y="439.5">8</text><text x="848.6" y="534.8">9</text><text x="816.4" y="560.9">10</text><text x="787.0" y="582.7">11</text><text x="766.6" y="601.0">12</text><text x="738.4" y="619.7">13</text><text x="716.0" y="642.8">14</text><text x="673.9" y="642.8">15</text><text x="631.9" y="642.8">16</text><text x="577.0" y="619.7">17</text><text x="580.5" y="549.7">18</text><text x="580.3" y="495.0">19</text><text x="580.5" y="456.2">20</text></g>
<text x="843.600" y="500.300" font-family="'Liberation Sans',sans-serif" font-size="5.300px" fill="#333" letter-spacing="-0.150">1046_003-002</text>
</svg>
<span class="abs" style="left:569.500px;top:154.500px;font-size:17.500px;line-height:20px;color:#fff;letter-spacing:-0.600px;-webkit-text-stroke:0.300px #fff">00</span>
<span class="abs" style="left:902.500px;top:155.800px;font-size:17.500px;line-height:20px;color:#fff;letter-spacing:-0.200px;white-space:nowrap;-webkit-text-stroke:0.550px #fff">Product information</span>
<span class="abs" style="left:569.500px;top:177.600px;font-size:15px;line-height:18px;color:#7d7d7d;letter-spacing:-0.070px;white-space:nowrap;-webkit-text-stroke:0.450px #7d7d7d">General product Information</span>
<span class="abs" style="left:569.500px;top:215.500px;font-size:12px;line-height:14px;color:#111;font-weight:700;letter-spacing:-0.250px;white-space:nowrap">CX S 16</span>
<span class="abs lg" style="left:569px;top:662.2px">1</span><span class="abs lg" style="left:606.300px;top:662.2px">Battery connector</span><span class="abs lg" style="left:822.500px;top:662.2px">11</span><span class="abs lg" style="left:859.600px;top:662.2px">Traction battery</span>
<span class="abs lg" style="left:569px;top:673.8px">2</span><span class="abs lg" style="left:606.300px;top:673.8px">Cockpit</span><span class="abs lg" style="left:822.500px;top:673.8px">12</span><span class="abs lg" style="left:859.600px;top:673.8px">Brake</span>
<span class="abs lg" style="left:569px;top:685.4px">3</span><span class="abs lg" style="left:606.300px;top:685.4px">Button for driving in pedestrian mode (option)</span><span class="abs lg" style="left:822.500px;top:685.4px">13</span><span class="abs lg" style="left:859.600px;top:685.4px">Traction motor</span>
<span class="abs lg" style="left:569px;top:697.1px">4</span><span class="abs lg" style="left:606.300px;top:697.1px">Back panel</span><span class="abs lg" style="left:822.500px;top:697.1px">14</span><span class="abs lg" style="left:859.600px;top:697.1px">Gearbox</span>
<span class="abs lg" style="left:569px;top:708.7px">5</span><span class="abs lg" style="left:606.300px;top:708.7px">Button for driving in pedestrian mode (option)</span><span class="abs lg" style="left:822.500px;top:708.7px">15</span><span class="abs lg" style="left:859.600px;top:708.7px">Traction wheel</span>
<span class="abs lg" style="left:569px;top:720.3px">6</span><span class="abs lg" style="left:606.300px;top:720.3px">Load wheels</span><span class="abs lg" style="left:822.500px;top:720.3px">16</span><span class="abs lg" style="left:859.600px;top:720.3px">Steering motor</span>
<span class="abs lg" style="left:569px;top:731.9px">7</span><span class="abs lg" style="left:606.300px;top:731.9px">Forks</span><span class="abs lg" style="left:822.500px;top:731.9px">17</span><span class="abs lg" style="left:859.600px;top:731.9px">Stabiliser wheel</span>
<span class="abs lg" style="left:569px;top:743.5px">8</span><span class="abs lg" style="left:606.300px;top:743.5px">Lift cylinder</span><span class="abs lg" style="left:822.500px;top:743.5px">18</span><span class="abs lg" style="left:859.600px;top:743.5px">Hydraulic oil tank</span>
<span class="abs lg" style="left:569px;top:755.2px">9</span><span class="abs lg" style="left:606.300px;top:755.2px">Steering and traction current controller</span><span class="abs lg" style="left:822.500px;top:755.2px">19</span><span class="abs lg" style="left:859.600px;top:755.2px">Pump motor</span>
<span class="abs lg" style="left:569px;top:766.8px">10</span><span class="abs lg" style="left:606.300px;top:766.8px">Operator platform</span><span class="abs lg" style="left:822.500px;top:766.8px">20</span><span class="abs lg" style="left:859.600px;top:766.8px">Fuse carrier</span>
<div id="bottom" class="abs"></div>
<div class="abs" style="left:632px;top:860px;width:48px;height:5px;background:#ececec"></div>
<div class="abs" style="left:48.500px;top:860px;width:286.500px;height:5px;background:#fff;border-top:1px solid #c9c9c9;box-sizing:border-box;overflow:hidden"><div class="abs" style="left:228px;top:1.500px;width:18px;height:14px;border-radius:50%;background:#3dbfc0"></div></div>
</body>
</html>
